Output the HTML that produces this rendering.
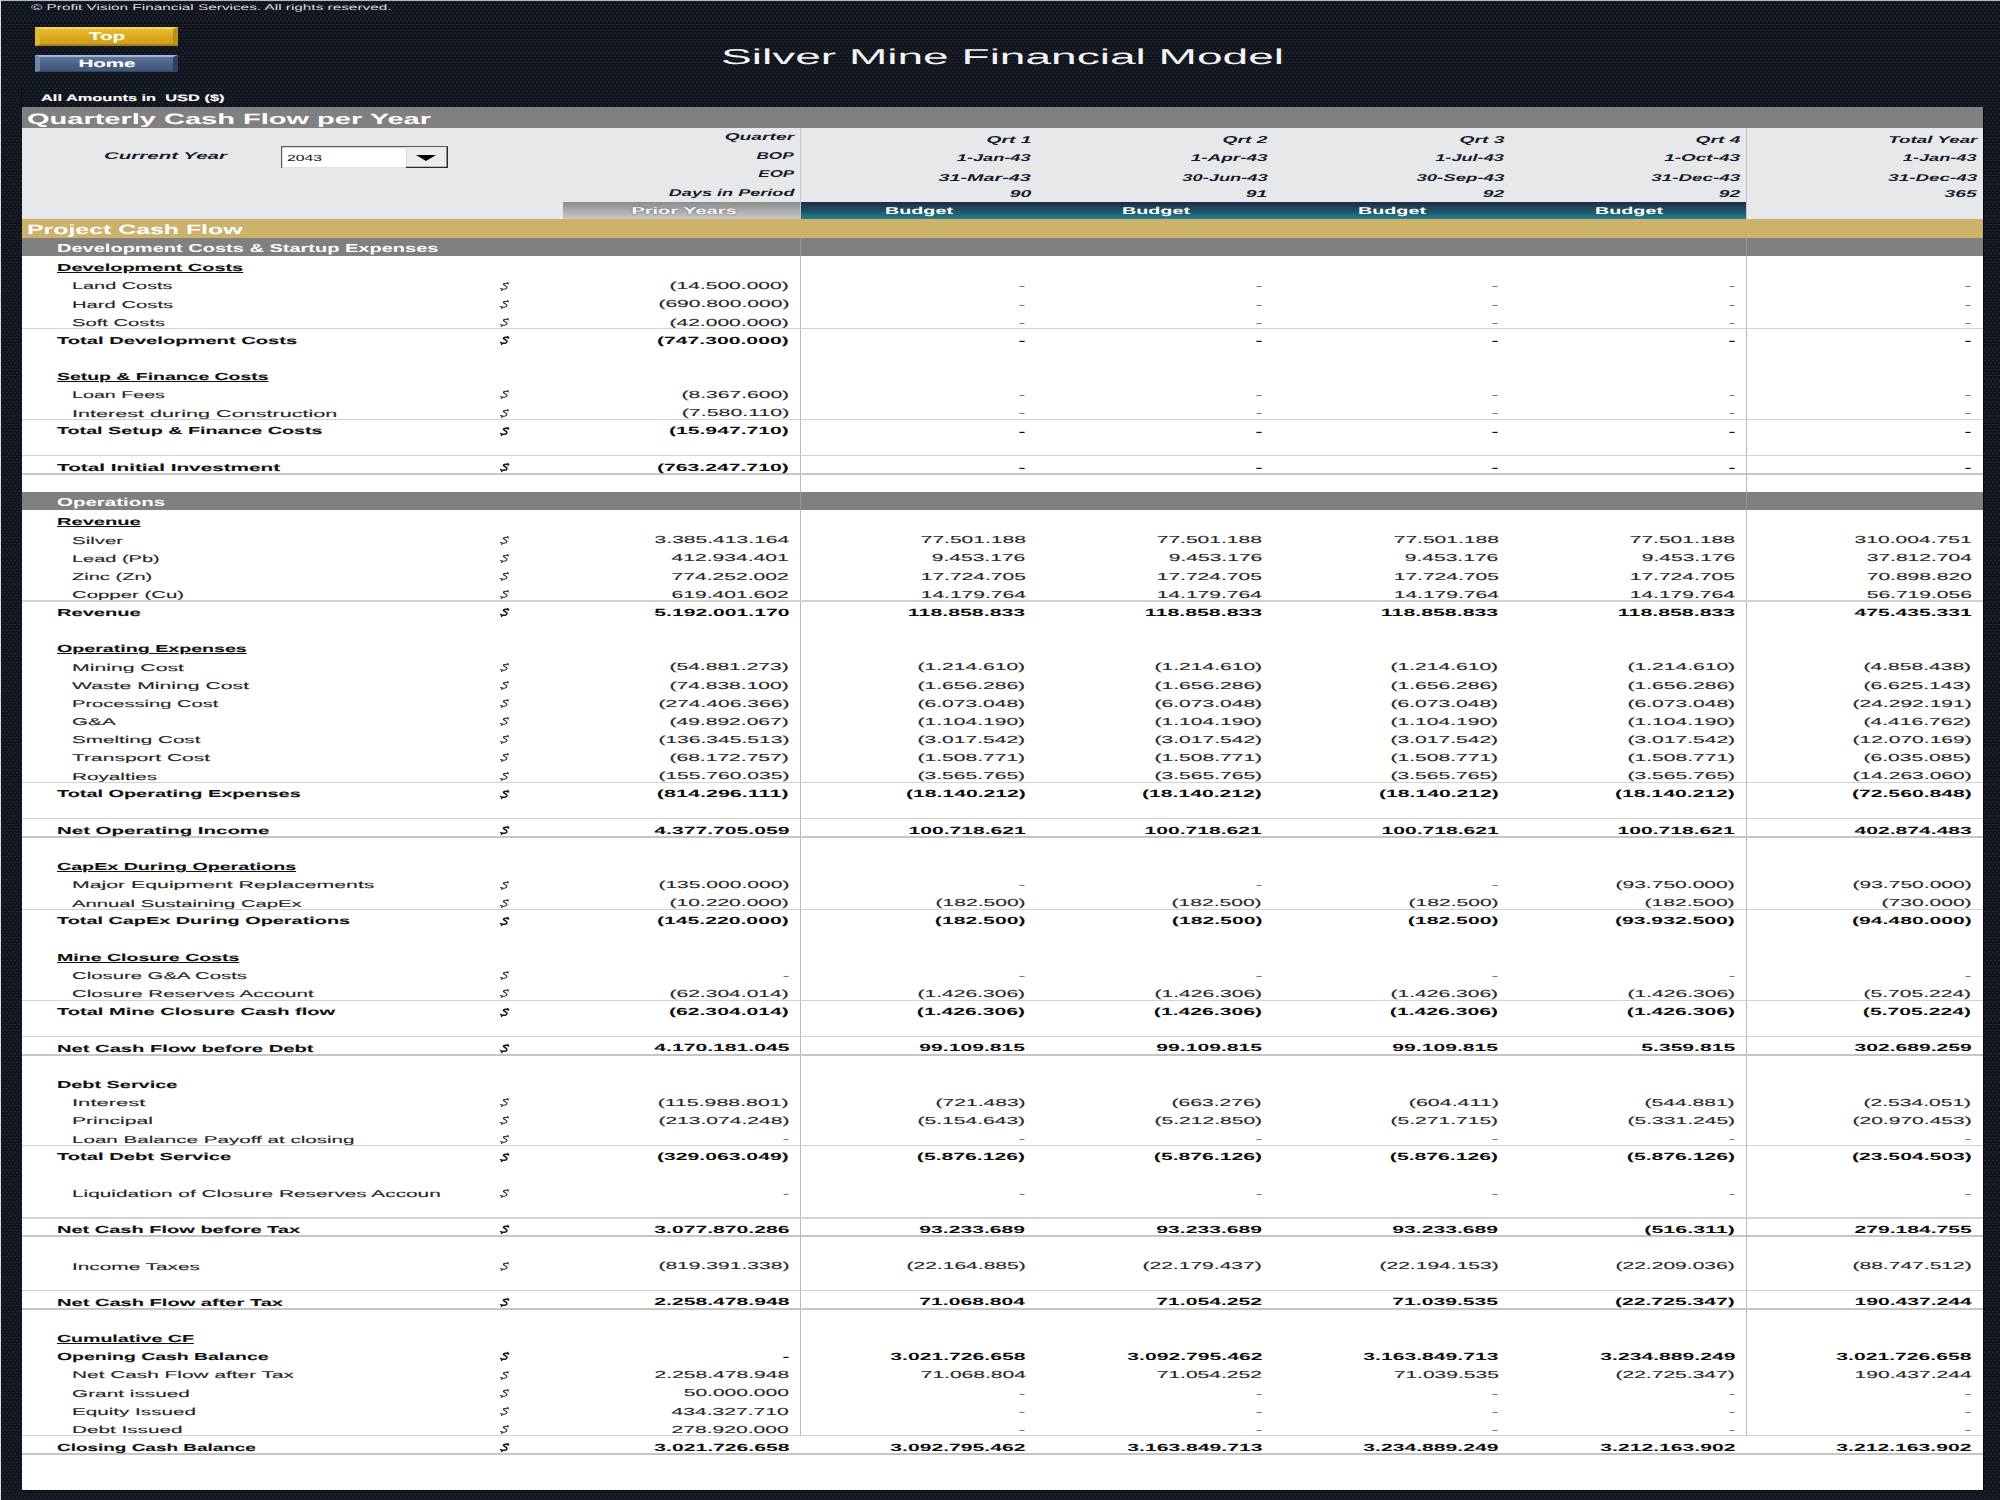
<!DOCTYPE html>
<html><head><meta charset="utf-8"><title>Silver Mine Financial Model</title>
<style>
html,body{margin:0;padding:0;}
body{width:2000px;height:1500px;position:relative;overflow:hidden;font-family:"Liberation Sans",sans-serif;
background-color:#10141c;
background-image:radial-gradient(ellipse 1.3px 0.75px at 1px 1.45px, #272c39 0%, #272c39 55%, rgba(39,44,57,0) 100%),radial-gradient(ellipse 1.3px 0.75px at 3px 4.35px, #272c39 0%, #272c39 55%, rgba(39,44,57,0) 100%);
background-size:4px 5.8px;}
.b{position:absolute;}
.t{position:absolute;white-space:nowrap;display:inline-block;-webkit-text-stroke:0.12px currentColor;text-rendering:geometricPrecision;}
</style></head><body>
<div class="b" style="left:0.00px;top:0.00px;width:2000.00px;height:1.20px;background:#b4b8c2;"></div>
<span class="t" style="top:3.76px;font-size:8.2px;line-height:8.2px;font-weight:normal;font-style:normal;color:#dcdcdc;left:30.50px;transform-origin:0 0;transform:scaleX(1.8732);-webkit-text-stroke:0;">&copy; Profit Vision Financial Services. All rights reserved.</span>
<div class="b" style="left:35px;top:27px;width:133px;height:14.5px;border-style:solid;border-width:2.5px 5px 2px 5px;border-color:#f4d463 #b8901c #a98417 #e2b935;background:linear-gradient(#e9bd2e,#d6a71d 60%,#cf9f1c);"></div>
<span class="t" style="top:31.77px;font-size:11.5px;line-height:11.5px;font-weight:bold;font-style:normal;color:#fffbe8;left:106.50px;transform-origin:50% 0;transform:translateX(-50%) scaleX(1.8039);">Top</span>
<div class="b" style="left:35px;top:54.5px;width:133px;height:14px;border-style:solid;border-width:2.5px 5px 1.5px 5px;border-color:#a3b6d8 #2f4160 #34476a #6d86ad;background:linear-gradient(#5c759d,#495f84 60%,#40557a);"></div>
<span class="t" style="top:58.71px;font-size:10.5px;line-height:10.5px;font-weight:bold;font-style:normal;color:#ffffff;left:106.50px;transform-origin:50% 0;transform:translateX(-50%) scaleX(1.9529);">Home</span>
<span class="t" style="top:46.80px;font-size:21.5px;line-height:21.5px;font-weight:normal;font-style:normal;color:#f4f4f4;left:721.00px;transform-origin:0 0;transform:scaleX(2.1416);-webkit-text-stroke:0;">Silver Mine Financial Model</span>
<span class="t" style="top:93.29px;font-size:9.4px;line-height:9.4px;font-weight:bold;font-style:normal;color:#ffffff;left:41.25px;transform-origin:0 0;transform:scaleX(1.7500);">All Amounts in&nbsp; USD ($)</span>
<div class="b" style="left:22.00px;top:107.30px;width:1960.50px;height:20.40px;background:#808080;"></div>
<span class="t" style="top:111.90px;font-size:15px;line-height:15px;font-weight:bold;font-style:normal;color:#ffffff;left:27.00px;transform-origin:0 0;transform:scaleX(1.9332);-webkit-text-stroke:0;">Quarterly Cash Flow per Year</span>
<div class="b" style="left:22.00px;top:127.70px;width:1960.50px;height:91.30px;background:#e7e8ea;"></div>
<div class="b" style="left:800.00px;top:127.70px;width:1.30px;height:91.30px;background:#c4c4c4;"></div>
<div class="b" style="left:1746.00px;top:127.70px;width:1.30px;height:91.30px;background:#c4c4c4;"></div>
<span class="t" style="top:133.34px;font-size:10px;line-height:10px;font-weight:bold;font-style:italic;color:#151b2b;right:1206.00px;transform-origin:100% 0;transform:scaleX(1.9227);-webkit-text-stroke:0;">Quarter</span>
<span class="t" style="top:151.53px;font-size:10px;line-height:10px;font-weight:bold;font-style:italic;color:#151b2b;right:1206.00px;transform-origin:100% 0;transform:scaleX(1.7172);-webkit-text-stroke:0;">BOP</span>
<span class="t" style="top:170.34px;font-size:10px;line-height:10px;font-weight:bold;font-style:italic;color:#151b2b;right:1206.00px;transform-origin:100% 0;transform:scaleX(1.6925);-webkit-text-stroke:0;">EOP</span>
<span class="t" style="top:188.73px;font-size:10px;line-height:10px;font-weight:bold;font-style:italic;color:#151b2b;right:1206.00px;transform-origin:100% 0;transform:scaleX(1.8093);-webkit-text-stroke:0;">Days in Period</span>
<span class="t" style="top:135.53px;font-size:10px;line-height:10px;font-weight:bold;font-style:italic;color:#151b2b;right:969.00px;transform-origin:100% 0;transform:scaleX(1.9245);-webkit-text-stroke:0;">Qrt 1</span>
<span class="t" style="top:135.53px;font-size:10px;line-height:10px;font-weight:bold;font-style:italic;color:#151b2b;right:732.50px;transform-origin:100% 0;transform:scaleX(1.9245);-webkit-text-stroke:0;">Qrt 2</span>
<span class="t" style="top:135.53px;font-size:10px;line-height:10px;font-weight:bold;font-style:italic;color:#151b2b;right:496.00px;transform-origin:100% 0;transform:scaleX(1.9245);-webkit-text-stroke:0;">Qrt 3</span>
<span class="t" style="top:135.53px;font-size:10px;line-height:10px;font-weight:bold;font-style:italic;color:#151b2b;right:259.50px;transform-origin:100% 0;transform:scaleX(1.9245);-webkit-text-stroke:0;">Qrt 4</span>
<span class="t" style="top:135.53px;font-size:10px;line-height:10px;font-weight:bold;font-style:italic;color:#151b2b;right:23.00px;transform-origin:100% 0;transform:scaleX(1.8801);-webkit-text-stroke:0;">Total Year</span>
<span class="t" style="top:153.53px;font-size:10px;line-height:10px;font-weight:bold;font-style:italic;color:#151b2b;right:969.00px;transform-origin:100% 0;transform:scaleX(1.8184);-webkit-text-stroke:0;">1-Jan-43</span>
<span class="t" style="top:153.53px;font-size:10px;line-height:10px;font-weight:bold;font-style:italic;color:#151b2b;right:732.50px;transform-origin:100% 0;transform:scaleX(1.8949);-webkit-text-stroke:0;">1-Apr-43</span>
<span class="t" style="top:153.53px;font-size:10px;line-height:10px;font-weight:bold;font-style:italic;color:#151b2b;right:496.00px;transform-origin:100% 0;transform:scaleX(1.8128);-webkit-text-stroke:0;">1-Jul-43</span>
<span class="t" style="top:153.53px;font-size:10px;line-height:10px;font-weight:bold;font-style:italic;color:#151b2b;right:259.50px;transform-origin:100% 0;transform:scaleX(1.8923);-webkit-text-stroke:0;">1-Oct-43</span>
<span class="t" style="top:153.53px;font-size:10px;line-height:10px;font-weight:bold;font-style:italic;color:#151b2b;right:23.00px;transform-origin:100% 0;transform:scaleX(1.8184);-webkit-text-stroke:0;">1-Jan-43</span>
<span class="t" style="top:173.53px;font-size:10px;line-height:10px;font-weight:bold;font-style:italic;color:#151b2b;right:969.00px;transform-origin:100% 0;transform:scaleX(1.9744);-webkit-text-stroke:0;">31-Mar-43</span>
<span class="t" style="top:173.53px;font-size:10px;line-height:10px;font-weight:bold;font-style:italic;color:#151b2b;right:732.50px;transform-origin:100% 0;transform:scaleX(1.8294);-webkit-text-stroke:0;">30-Jun-43</span>
<span class="t" style="top:173.53px;font-size:10px;line-height:10px;font-weight:bold;font-style:italic;color:#151b2b;right:496.00px;transform-origin:100% 0;transform:scaleX(1.8587);-webkit-text-stroke:0;">30-Sep-43</span>
<span class="t" style="top:173.53px;font-size:10px;line-height:10px;font-weight:bold;font-style:italic;color:#151b2b;right:259.50px;transform-origin:100% 0;transform:scaleX(1.8813);-webkit-text-stroke:0;">31-Dec-43</span>
<span class="t" style="top:173.53px;font-size:10px;line-height:10px;font-weight:bold;font-style:italic;color:#151b2b;right:23.00px;transform-origin:100% 0;transform:scaleX(1.8813);-webkit-text-stroke:0;">31-Dec-43</span>
<span class="t" style="top:189.53px;font-size:10px;line-height:10px;font-weight:bold;font-style:italic;color:#151b2b;right:969.00px;transform-origin:100% 0;transform:scaleX(1.9317);-webkit-text-stroke:0;">90</span>
<span class="t" style="top:189.53px;font-size:10px;line-height:10px;font-weight:bold;font-style:italic;color:#151b2b;right:732.50px;transform-origin:100% 0;transform:scaleX(1.9317);-webkit-text-stroke:0;">91</span>
<span class="t" style="top:189.53px;font-size:10px;line-height:10px;font-weight:bold;font-style:italic;color:#151b2b;right:496.00px;transform-origin:100% 0;transform:scaleX(1.9317);-webkit-text-stroke:0;">92</span>
<span class="t" style="top:189.53px;font-size:10px;line-height:10px;font-weight:bold;font-style:italic;color:#151b2b;right:259.50px;transform-origin:100% 0;transform:scaleX(1.9317);-webkit-text-stroke:0;">92</span>
<span class="t" style="top:189.53px;font-size:10px;line-height:10px;font-weight:bold;font-style:italic;color:#151b2b;right:23.00px;transform-origin:100% 0;transform:scaleX(1.9317);-webkit-text-stroke:0;">365</span>
<span class="t" style="top:152.20px;font-size:9.8px;line-height:9.8px;font-weight:bold;font-style:italic;color:#151b2b;left:104.00px;transform-origin:0 0;transform:scaleX(2.0914);-webkit-text-stroke:0;">Current Year</span>
<div class="b" style="left:280.50px;top:146.00px;width:167.50px;height:22.00px;background:#ffffff;box-shadow:inset 1.2px 1.2px 0 #5a5a5a, inset -1px -1px 0 #e0e0e0;"></div>
<div class="b" style="left:405.50px;top:147.20px;width:42.50px;height:20.80px;background:#ededed;box-shadow:inset -1.5px -1.2px 0 #2a2a2a, inset 1px 0 0 #d8d8d8;"></div>
<div class="b" style="left:415.5px;top:154.8px;width:0;height:0;border-left:10.8px solid transparent;border-right:10.8px solid transparent;border-top:6.2px solid #000;"></div>
<span class="t" style="top:153.88px;font-size:9px;line-height:9px;font-weight:normal;font-style:normal;color:#111;left:287.00px;transform-origin:0 0;transform:scaleX(1.7473);-webkit-text-stroke:0;">2043</span>
<div class="b" style="left:563.00px;top:202.00px;width:236.50px;height:17.00px;background:linear-gradient(#8c8c8c,#c9c9c9);"></div>
<span class="t" style="top:207.13px;font-size:10px;line-height:10px;font-weight:bold;font-style:normal;color:#f8f8f8;left:683.50px;transform-origin:50% 0;transform:translateX(-50%) scaleX(1.9947);text-shadow:0 0 1px #555,0 0 1px #555;">Prior Years</span>
<div class="b" style="left:801.00px;top:202.00px;width:945.00px;height:17.00px;background:linear-gradient(#1d2b43 0%,#1f5468 55%,#23808f 100%);"></div>
<span class="t" style="top:207.44px;font-size:10px;line-height:10px;font-weight:bold;font-style:normal;color:#ffffff;left:919.00px;transform-origin:50% 0;transform:translateX(-50%) scaleX(1.9737);-webkit-text-stroke:0;">Budget</span>
<span class="t" style="top:207.44px;font-size:10px;line-height:10px;font-weight:bold;font-style:normal;color:#ffffff;left:1155.50px;transform-origin:50% 0;transform:translateX(-50%) scaleX(1.9737);-webkit-text-stroke:0;">Budget</span>
<span class="t" style="top:207.44px;font-size:10px;line-height:10px;font-weight:bold;font-style:normal;color:#ffffff;left:1392.00px;transform-origin:50% 0;transform:translateX(-50%) scaleX(1.9737);-webkit-text-stroke:0;">Budget</span>
<span class="t" style="top:207.44px;font-size:10px;line-height:10px;font-weight:bold;font-style:normal;color:#ffffff;left:1628.50px;transform-origin:50% 0;transform:translateX(-50%) scaleX(1.9737);-webkit-text-stroke:0;">Budget</span>
<div class="b" style="left:22.00px;top:219.00px;width:1960.50px;height:19.20px;background:#ccb26b;"></div>
<span class="t" style="top:223.07px;font-size:13.5px;line-height:13.5px;font-weight:bold;font-style:normal;color:#ffffff;left:27.00px;transform-origin:0 0;transform:scaleX(1.8414);-webkit-text-stroke:0;">Project Cash Flow</span>
<div class="b" style="left:22.00px;top:238.20px;width:1960.50px;height:1251.80px;background:#ffffff;"></div>
<div class="b" style="left:1982.50px;top:107.30px;width:1.20px;height:1383.70px;background:#05070b;"></div>
<div class="b" style="left:22.00px;top:1490.00px;width:1961.70px;height:1.30px;background:#05070b;"></div>
<div class="b" style="left:0.00px;top:0.00px;width:1.20px;height:1500.00px;background:#dcdcdc;"></div>
<div class="b" style="left:21.30px;top:88.00px;width:1.00px;height:19.30px;background:#0a0c12;"></div>
<div class="b" style="left:800.00px;top:238.20px;width:1.40px;height:1197.45px;background:#b8b8b8;"></div>
<div class="b" style="left:1746.00px;top:238.20px;width:1.40px;height:1197.45px;background:#b8b8b8;"></div>
<div class="b" style="left:22.00px;top:237.75px;width:1960.50px;height:18.30px;background:#808080;"></div>
<div class="b" style="left:800.00px;top:237.75px;width:1.30px;height:18.30px;background:#9a9a9a;"></div>
<div class="b" style="left:1746.00px;top:237.75px;width:1.30px;height:18.30px;background:#9a9a9a;"></div>
<span class="t" style="top:244.32px;font-size:11.5px;line-height:11.5px;font-weight:bold;font-style:normal;color:#ffffff;left:57.00px;transform-origin:0 0;transform:scaleX(1.7402);-webkit-text-stroke:0;">Development Costs &amp; Startup Expenses</span>
<span class="t" style="top:264.07px;font-size:10.2px;line-height:10.2px;font-weight:bold;font-style:normal;color:#111111;text-decoration:underline;left:57.00px;transform-origin:0 0;transform:scaleX(1.9579);-webkit-text-stroke:0.1px currentColor;">Development Costs</span>
<span class="t" style="top:282.47px;font-size:9.9px;line-height:9.9px;font-weight:normal;font-style:normal;color:#262626;left:71.50px;transform-origin:0 0;transform:scaleX(2.0128);">Land Costs</span>
<svg class="b" style="left:499px;top:280.55px" width="12" height="11" viewBox="0 0 12 11"><path d="M9.6 2.9 C8.7 2.0 5.5 1.9 4.5 3.0 C3.5 4.2 8.6 4.8 8.0 6.7 C7.4 8.5 3.6 8.7 1.6 7.6 M8.9 1.5 L8.4 2.4 M2.6 9.5 L3.1 8.6" fill="none" stroke="#2a2a2a" stroke-width="1.15" stroke-linecap="round"/></svg>
<span class="t" style="top:282.22px;font-size:10.2px;line-height:10.2px;font-weight:normal;font-style:normal;color:#262626;right:1211.00px;transform-origin:100% 0;transform:scaleX(2.0653);">(14.500.000)</span>
<span class="t" style="top:282.39px;font-size:10px;line-height:10px;font-weight:normal;font-style:normal;color:#555;right:974.50px;transform-origin:100% 0;transform:scaleX(1.9439);">-</span>
<span class="t" style="top:282.39px;font-size:10px;line-height:10px;font-weight:normal;font-style:normal;color:#555;right:738.00px;transform-origin:100% 0;transform:scaleX(1.9439);">-</span>
<span class="t" style="top:282.39px;font-size:10px;line-height:10px;font-weight:normal;font-style:normal;color:#555;right:501.50px;transform-origin:100% 0;transform:scaleX(1.9439);">-</span>
<span class="t" style="top:282.39px;font-size:10px;line-height:10px;font-weight:normal;font-style:normal;color:#555;right:265.00px;transform-origin:100% 0;transform:scaleX(1.9439);">-</span>
<span class="t" style="top:282.39px;font-size:10px;line-height:10px;font-weight:normal;font-style:normal;color:#555;right:28.50px;transform-origin:100% 0;transform:scaleX(1.9439);">-</span>
<span class="t" style="top:300.62px;font-size:9.9px;line-height:9.9px;font-weight:normal;font-style:normal;color:#262626;left:71.50px;transform-origin:0 0;transform:scaleX(2.0485);">Hard Costs</span>
<svg class="b" style="left:499px;top:298.70px" width="12" height="11" viewBox="0 0 12 11"><path d="M9.6 2.9 C8.7 2.0 5.5 1.9 4.5 3.0 C3.5 4.2 8.6 4.8 8.0 6.7 C7.4 8.5 3.6 8.7 1.6 7.6 M8.9 1.5 L8.4 2.4 M2.6 9.5 L3.1 8.6" fill="none" stroke="#2a2a2a" stroke-width="1.15" stroke-linecap="round"/></svg>
<span class="t" style="top:300.37px;font-size:10.2px;line-height:10.2px;font-weight:normal;font-style:normal;color:#262626;right:1211.00px;transform-origin:100% 0;transform:scaleX(2.0652);">(690.800.000)</span>
<span class="t" style="top:300.54px;font-size:10px;line-height:10px;font-weight:normal;font-style:normal;color:#555;right:974.50px;transform-origin:100% 0;transform:scaleX(1.9439);">-</span>
<span class="t" style="top:300.54px;font-size:10px;line-height:10px;font-weight:normal;font-style:normal;color:#555;right:738.00px;transform-origin:100% 0;transform:scaleX(1.9439);">-</span>
<span class="t" style="top:300.54px;font-size:10px;line-height:10px;font-weight:normal;font-style:normal;color:#555;right:501.50px;transform-origin:100% 0;transform:scaleX(1.9439);">-</span>
<span class="t" style="top:300.54px;font-size:10px;line-height:10px;font-weight:normal;font-style:normal;color:#555;right:265.00px;transform-origin:100% 0;transform:scaleX(1.9439);">-</span>
<span class="t" style="top:300.54px;font-size:10px;line-height:10px;font-weight:normal;font-style:normal;color:#555;right:28.50px;transform-origin:100% 0;transform:scaleX(1.9439);">-</span>
<span class="t" style="top:318.77px;font-size:9.9px;line-height:9.9px;font-weight:normal;font-style:normal;color:#262626;left:71.50px;transform-origin:0 0;transform:scaleX(2.0436);">Soft Costs</span>
<svg class="b" style="left:499px;top:316.85px" width="12" height="11" viewBox="0 0 12 11"><path d="M9.6 2.9 C8.7 2.0 5.5 1.9 4.5 3.0 C3.5 4.2 8.6 4.8 8.0 6.7 C7.4 8.5 3.6 8.7 1.6 7.6 M8.9 1.5 L8.4 2.4 M2.6 9.5 L3.1 8.6" fill="none" stroke="#2a2a2a" stroke-width="1.15" stroke-linecap="round"/></svg>
<span class="t" style="top:318.52px;font-size:10.2px;line-height:10.2px;font-weight:normal;font-style:normal;color:#262626;right:1211.00px;transform-origin:100% 0;transform:scaleX(2.0653);">(42.000.000)</span>
<span class="t" style="top:318.69px;font-size:10px;line-height:10px;font-weight:normal;font-style:normal;color:#555;right:974.50px;transform-origin:100% 0;transform:scaleX(1.9439);">-</span>
<span class="t" style="top:318.69px;font-size:10px;line-height:10px;font-weight:normal;font-style:normal;color:#555;right:738.00px;transform-origin:100% 0;transform:scaleX(1.9439);">-</span>
<span class="t" style="top:318.69px;font-size:10px;line-height:10px;font-weight:normal;font-style:normal;color:#555;right:501.50px;transform-origin:100% 0;transform:scaleX(1.9439);">-</span>
<span class="t" style="top:318.69px;font-size:10px;line-height:10px;font-weight:normal;font-style:normal;color:#555;right:265.00px;transform-origin:100% 0;transform:scaleX(1.9439);">-</span>
<span class="t" style="top:318.69px;font-size:10px;line-height:10px;font-weight:normal;font-style:normal;color:#555;right:28.50px;transform-origin:100% 0;transform:scaleX(1.9439);">-</span>
<div class="b" style="left:22.00px;top:328.00px;width:1960.50px;height:1.30px;background:#d2d2d2;"></div>
<span class="t" style="top:336.67px;font-size:10.2px;line-height:10.2px;font-weight:bold;font-style:normal;color:#111111;left:57.00px;transform-origin:0 0;transform:scaleX(1.9762);-webkit-text-stroke:0.1px currentColor;">Total Development Costs</span>
<svg class="b" style="left:499px;top:335.00px" width="12" height="11" viewBox="0 0 12 11"><path d="M9.6 2.9 C8.7 2.0 5.5 1.9 4.5 3.0 C3.5 4.2 8.6 4.8 8.0 6.7 C7.4 8.5 3.6 8.7 1.6 7.6 M8.9 1.5 L8.4 2.4 M2.6 9.5 L3.1 8.6" fill="none" stroke="#151515" stroke-width="1.5" stroke-linecap="round"/></svg>
<span class="t" style="top:336.50px;font-size:10.4px;line-height:10.4px;font-weight:bold;font-style:normal;color:#0d0d0d;right:1211.00px;transform-origin:100% 0;transform:scaleX(2.0361);-webkit-text-stroke:0;">(747.300.000)</span>
<span class="t" style="top:336.84px;font-size:10px;line-height:10px;font-weight:bold;font-style:normal;color:#111;right:974.50px;transform-origin:100% 0;transform:scaleX(1.9439);">-</span>
<span class="t" style="top:336.84px;font-size:10px;line-height:10px;font-weight:bold;font-style:normal;color:#111;right:738.00px;transform-origin:100% 0;transform:scaleX(1.9439);">-</span>
<span class="t" style="top:336.84px;font-size:10px;line-height:10px;font-weight:bold;font-style:normal;color:#111;right:501.50px;transform-origin:100% 0;transform:scaleX(1.9439);">-</span>
<span class="t" style="top:336.84px;font-size:10px;line-height:10px;font-weight:bold;font-style:normal;color:#111;right:265.00px;transform-origin:100% 0;transform:scaleX(1.9439);">-</span>
<span class="t" style="top:336.84px;font-size:10px;line-height:10px;font-weight:bold;font-style:normal;color:#111;right:28.50px;transform-origin:100% 0;transform:scaleX(1.9439);">-</span>
<span class="t" style="top:372.97px;font-size:10.2px;line-height:10.2px;font-weight:bold;font-style:normal;color:#111111;text-decoration:underline;left:57.00px;transform-origin:0 0;transform:scaleX(1.9068);-webkit-text-stroke:0.1px currentColor;">Setup &amp; Finance Costs</span>
<span class="t" style="top:391.37px;font-size:9.9px;line-height:9.9px;font-weight:normal;font-style:normal;color:#262626;left:71.50px;transform-origin:0 0;transform:scaleX(1.9916);">Loan Fees</span>
<svg class="b" style="left:499px;top:389.45px" width="12" height="11" viewBox="0 0 12 11"><path d="M9.6 2.9 C8.7 2.0 5.5 1.9 4.5 3.0 C3.5 4.2 8.6 4.8 8.0 6.7 C7.4 8.5 3.6 8.7 1.6 7.6 M8.9 1.5 L8.4 2.4 M2.6 9.5 L3.1 8.6" fill="none" stroke="#2a2a2a" stroke-width="1.15" stroke-linecap="round"/></svg>
<span class="t" style="top:391.12px;font-size:10.2px;line-height:10.2px;font-weight:normal;font-style:normal;color:#262626;right:1211.00px;transform-origin:100% 0;transform:scaleX(2.0654);">(8.367.600)</span>
<span class="t" style="top:391.29px;font-size:10px;line-height:10px;font-weight:normal;font-style:normal;color:#555;right:974.50px;transform-origin:100% 0;transform:scaleX(1.9439);">-</span>
<span class="t" style="top:391.29px;font-size:10px;line-height:10px;font-weight:normal;font-style:normal;color:#555;right:738.00px;transform-origin:100% 0;transform:scaleX(1.9439);">-</span>
<span class="t" style="top:391.29px;font-size:10px;line-height:10px;font-weight:normal;font-style:normal;color:#555;right:501.50px;transform-origin:100% 0;transform:scaleX(1.9439);">-</span>
<span class="t" style="top:391.29px;font-size:10px;line-height:10px;font-weight:normal;font-style:normal;color:#555;right:265.00px;transform-origin:100% 0;transform:scaleX(1.9439);">-</span>
<span class="t" style="top:391.29px;font-size:10px;line-height:10px;font-weight:normal;font-style:normal;color:#555;right:28.50px;transform-origin:100% 0;transform:scaleX(1.9439);">-</span>
<span class="t" style="top:409.52px;font-size:9.9px;line-height:9.9px;font-weight:normal;font-style:normal;color:#262626;left:71.50px;transform-origin:0 0;transform:scaleX(2.1870);">Interest during Construction</span>
<svg class="b" style="left:499px;top:407.60px" width="12" height="11" viewBox="0 0 12 11"><path d="M9.6 2.9 C8.7 2.0 5.5 1.9 4.5 3.0 C3.5 4.2 8.6 4.8 8.0 6.7 C7.4 8.5 3.6 8.7 1.6 7.6 M8.9 1.5 L8.4 2.4 M2.6 9.5 L3.1 8.6" fill="none" stroke="#2a2a2a" stroke-width="1.15" stroke-linecap="round"/></svg>
<span class="t" style="top:409.27px;font-size:10.2px;line-height:10.2px;font-weight:normal;font-style:normal;color:#262626;right:1211.00px;transform-origin:100% 0;transform:scaleX(2.0956);">(7.580.110)</span>
<span class="t" style="top:409.44px;font-size:10px;line-height:10px;font-weight:normal;font-style:normal;color:#555;right:974.50px;transform-origin:100% 0;transform:scaleX(1.9439);">-</span>
<span class="t" style="top:409.44px;font-size:10px;line-height:10px;font-weight:normal;font-style:normal;color:#555;right:738.00px;transform-origin:100% 0;transform:scaleX(1.9439);">-</span>
<span class="t" style="top:409.44px;font-size:10px;line-height:10px;font-weight:normal;font-style:normal;color:#555;right:501.50px;transform-origin:100% 0;transform:scaleX(1.9439);">-</span>
<span class="t" style="top:409.44px;font-size:10px;line-height:10px;font-weight:normal;font-style:normal;color:#555;right:265.00px;transform-origin:100% 0;transform:scaleX(1.9439);">-</span>
<span class="t" style="top:409.44px;font-size:10px;line-height:10px;font-weight:normal;font-style:normal;color:#555;right:28.50px;transform-origin:100% 0;transform:scaleX(1.9439);">-</span>
<div class="b" style="left:22.00px;top:418.75px;width:1960.50px;height:1.30px;background:#d2d2d2;"></div>
<span class="t" style="top:427.42px;font-size:10.2px;line-height:10.2px;font-weight:bold;font-style:normal;color:#111111;left:57.00px;transform-origin:0 0;transform:scaleX(1.9328);-webkit-text-stroke:0.1px currentColor;">Total Setup &amp; Finance Costs</span>
<svg class="b" style="left:499px;top:425.75px" width="12" height="11" viewBox="0 0 12 11"><path d="M9.6 2.9 C8.7 2.0 5.5 1.9 4.5 3.0 C3.5 4.2 8.6 4.8 8.0 6.7 C7.4 8.5 3.6 8.7 1.6 7.6 M8.9 1.5 L8.4 2.4 M2.6 9.5 L3.1 8.6" fill="none" stroke="#151515" stroke-width="1.5" stroke-linecap="round"/></svg>
<span class="t" style="top:427.25px;font-size:10.4px;line-height:10.4px;font-weight:bold;font-style:normal;color:#0d0d0d;right:1211.00px;transform-origin:100% 0;transform:scaleX(2.0366);-webkit-text-stroke:0;">(15.947.710)</span>
<span class="t" style="top:427.59px;font-size:10px;line-height:10px;font-weight:bold;font-style:normal;color:#111;right:974.50px;transform-origin:100% 0;transform:scaleX(1.9439);">-</span>
<span class="t" style="top:427.59px;font-size:10px;line-height:10px;font-weight:bold;font-style:normal;color:#111;right:738.00px;transform-origin:100% 0;transform:scaleX(1.9439);">-</span>
<span class="t" style="top:427.59px;font-size:10px;line-height:10px;font-weight:bold;font-style:normal;color:#111;right:501.50px;transform-origin:100% 0;transform:scaleX(1.9439);">-</span>
<span class="t" style="top:427.59px;font-size:10px;line-height:10px;font-weight:bold;font-style:normal;color:#111;right:265.00px;transform-origin:100% 0;transform:scaleX(1.9439);">-</span>
<span class="t" style="top:427.59px;font-size:10px;line-height:10px;font-weight:bold;font-style:normal;color:#111;right:28.50px;transform-origin:100% 0;transform:scaleX(1.9439);">-</span>
<div class="b" style="left:22.00px;top:455.05px;width:1960.50px;height:1.30px;background:#d2d2d2;"></div>
<div class="b" style="left:22.00px;top:472.90px;width:1960.50px;height:2.00px;background:#c6c6c6;"></div>
<span class="t" style="top:463.72px;font-size:10.2px;line-height:10.2px;font-weight:bold;font-style:normal;color:#111111;left:57.00px;transform-origin:0 0;transform:scaleX(2.0358);-webkit-text-stroke:0.1px currentColor;">Total Initial Investment</span>
<svg class="b" style="left:499px;top:462.05px" width="12" height="11" viewBox="0 0 12 11"><path d="M9.6 2.9 C8.7 2.0 5.5 1.9 4.5 3.0 C3.5 4.2 8.6 4.8 8.0 6.7 C7.4 8.5 3.6 8.7 1.6 7.6 M8.9 1.5 L8.4 2.4 M2.6 9.5 L3.1 8.6" fill="none" stroke="#151515" stroke-width="1.5" stroke-linecap="round"/></svg>
<span class="t" style="top:463.55px;font-size:10.4px;line-height:10.4px;font-weight:bold;font-style:normal;color:#0d0d0d;right:1211.00px;transform-origin:100% 0;transform:scaleX(2.0361);-webkit-text-stroke:0;">(763.247.710)</span>
<span class="t" style="top:463.88px;font-size:10px;line-height:10px;font-weight:bold;font-style:normal;color:#111;right:974.50px;transform-origin:100% 0;transform:scaleX(1.9439);">-</span>
<span class="t" style="top:463.88px;font-size:10px;line-height:10px;font-weight:bold;font-style:normal;color:#111;right:738.00px;transform-origin:100% 0;transform:scaleX(1.9439);">-</span>
<span class="t" style="top:463.88px;font-size:10px;line-height:10px;font-weight:bold;font-style:normal;color:#111;right:501.50px;transform-origin:100% 0;transform:scaleX(1.9439);">-</span>
<span class="t" style="top:463.88px;font-size:10px;line-height:10px;font-weight:bold;font-style:normal;color:#111;right:265.00px;transform-origin:100% 0;transform:scaleX(1.9439);">-</span>
<span class="t" style="top:463.88px;font-size:10px;line-height:10px;font-weight:bold;font-style:normal;color:#111;right:28.50px;transform-origin:100% 0;transform:scaleX(1.9439);">-</span>
<div class="b" style="left:22.00px;top:491.85px;width:1960.50px;height:18.30px;background:#808080;"></div>
<div class="b" style="left:800.00px;top:491.85px;width:1.30px;height:18.30px;background:#9a9a9a;"></div>
<div class="b" style="left:1746.00px;top:491.85px;width:1.30px;height:18.30px;background:#9a9a9a;"></div>
<span class="t" style="top:498.42px;font-size:11.5px;line-height:11.5px;font-weight:bold;font-style:normal;color:#ffffff;left:57.00px;transform-origin:0 0;transform:scaleX(1.7792);-webkit-text-stroke:0;">Operations</span>
<span class="t" style="top:518.17px;font-size:10.2px;line-height:10.2px;font-weight:bold;font-style:normal;color:#111111;text-decoration:underline;left:57.00px;transform-origin:0 0;transform:scaleX(1.9688);-webkit-text-stroke:0.1px currentColor;">Revenue</span>
<span class="t" style="top:536.57px;font-size:9.9px;line-height:9.9px;font-weight:normal;font-style:normal;color:#262626;left:71.50px;transform-origin:0 0;transform:scaleX(2.0725);">Silver</span>
<svg class="b" style="left:499px;top:534.65px" width="12" height="11" viewBox="0 0 12 11"><path d="M9.6 2.9 C8.7 2.0 5.5 1.9 4.5 3.0 C3.5 4.2 8.6 4.8 8.0 6.7 C7.4 8.5 3.6 8.7 1.6 7.6 M8.9 1.5 L8.4 2.4 M2.6 9.5 L3.1 8.6" fill="none" stroke="#2a2a2a" stroke-width="1.15" stroke-linecap="round"/></svg>
<span class="t" style="top:536.32px;font-size:10.2px;line-height:10.2px;font-weight:normal;font-style:normal;color:#262626;right:1211.00px;transform-origin:100% 0;transform:scaleX(2.0654);">3.385.413.164</span>
<span class="t" style="top:536.32px;font-size:10.2px;line-height:10.2px;font-weight:normal;font-style:normal;color:#262626;right:974.50px;transform-origin:100% 0;transform:scaleX(2.0652);">77.501.188</span>
<span class="t" style="top:536.32px;font-size:10.2px;line-height:10.2px;font-weight:normal;font-style:normal;color:#262626;right:738.00px;transform-origin:100% 0;transform:scaleX(2.0652);">77.501.188</span>
<span class="t" style="top:536.32px;font-size:10.2px;line-height:10.2px;font-weight:normal;font-style:normal;color:#262626;right:501.50px;transform-origin:100% 0;transform:scaleX(2.0652);">77.501.188</span>
<span class="t" style="top:536.32px;font-size:10.2px;line-height:10.2px;font-weight:normal;font-style:normal;color:#262626;right:265.00px;transform-origin:100% 0;transform:scaleX(2.0652);">77.501.188</span>
<span class="t" style="top:536.32px;font-size:10.2px;line-height:10.2px;font-weight:normal;font-style:normal;color:#262626;right:28.50px;transform-origin:100% 0;transform:scaleX(2.0657);">310.004.751</span>
<span class="t" style="top:554.72px;font-size:9.9px;line-height:9.9px;font-weight:normal;font-style:normal;color:#262626;left:71.50px;transform-origin:0 0;transform:scaleX(2.0221);">Lead (Pb)</span>
<svg class="b" style="left:499px;top:552.80px" width="12" height="11" viewBox="0 0 12 11"><path d="M9.6 2.9 C8.7 2.0 5.5 1.9 4.5 3.0 C3.5 4.2 8.6 4.8 8.0 6.7 C7.4 8.5 3.6 8.7 1.6 7.6 M8.9 1.5 L8.4 2.4 M2.6 9.5 L3.1 8.6" fill="none" stroke="#2a2a2a" stroke-width="1.15" stroke-linecap="round"/></svg>
<span class="t" style="top:554.47px;font-size:10.2px;line-height:10.2px;font-weight:normal;font-style:normal;color:#262626;right:1211.00px;transform-origin:100% 0;transform:scaleX(2.0657);">412.934.401</span>
<span class="t" style="top:554.47px;font-size:10.2px;line-height:10.2px;font-weight:normal;font-style:normal;color:#262626;right:974.50px;transform-origin:100% 0;transform:scaleX(2.0653);">9.453.176</span>
<span class="t" style="top:554.47px;font-size:10.2px;line-height:10.2px;font-weight:normal;font-style:normal;color:#262626;right:738.00px;transform-origin:100% 0;transform:scaleX(2.0653);">9.453.176</span>
<span class="t" style="top:554.47px;font-size:10.2px;line-height:10.2px;font-weight:normal;font-style:normal;color:#262626;right:501.50px;transform-origin:100% 0;transform:scaleX(2.0653);">9.453.176</span>
<span class="t" style="top:554.47px;font-size:10.2px;line-height:10.2px;font-weight:normal;font-style:normal;color:#262626;right:265.00px;transform-origin:100% 0;transform:scaleX(2.0653);">9.453.176</span>
<span class="t" style="top:554.47px;font-size:10.2px;line-height:10.2px;font-weight:normal;font-style:normal;color:#262626;right:28.50px;transform-origin:100% 0;transform:scaleX(2.0652);">37.812.704</span>
<span class="t" style="top:572.87px;font-size:9.9px;line-height:9.9px;font-weight:normal;font-style:normal;color:#262626;left:71.50px;transform-origin:0 0;transform:scaleX(2.0306);">Zinc (Zn)</span>
<svg class="b" style="left:499px;top:570.95px" width="12" height="11" viewBox="0 0 12 11"><path d="M9.6 2.9 C8.7 2.0 5.5 1.9 4.5 3.0 C3.5 4.2 8.6 4.8 8.0 6.7 C7.4 8.5 3.6 8.7 1.6 7.6 M8.9 1.5 L8.4 2.4 M2.6 9.5 L3.1 8.6" fill="none" stroke="#2a2a2a" stroke-width="1.15" stroke-linecap="round"/></svg>
<span class="t" style="top:572.62px;font-size:10.2px;line-height:10.2px;font-weight:normal;font-style:normal;color:#262626;right:1211.00px;transform-origin:100% 0;transform:scaleX(2.0657);">774.252.002</span>
<span class="t" style="top:572.62px;font-size:10.2px;line-height:10.2px;font-weight:normal;font-style:normal;color:#262626;right:974.50px;transform-origin:100% 0;transform:scaleX(2.0652);">17.724.705</span>
<span class="t" style="top:572.62px;font-size:10.2px;line-height:10.2px;font-weight:normal;font-style:normal;color:#262626;right:738.00px;transform-origin:100% 0;transform:scaleX(2.0652);">17.724.705</span>
<span class="t" style="top:572.62px;font-size:10.2px;line-height:10.2px;font-weight:normal;font-style:normal;color:#262626;right:501.50px;transform-origin:100% 0;transform:scaleX(2.0652);">17.724.705</span>
<span class="t" style="top:572.62px;font-size:10.2px;line-height:10.2px;font-weight:normal;font-style:normal;color:#262626;right:265.00px;transform-origin:100% 0;transform:scaleX(2.0652);">17.724.705</span>
<span class="t" style="top:572.62px;font-size:10.2px;line-height:10.2px;font-weight:normal;font-style:normal;color:#262626;right:28.50px;transform-origin:100% 0;transform:scaleX(2.0652);">70.898.820</span>
<span class="t" style="top:591.02px;font-size:9.9px;line-height:9.9px;font-weight:normal;font-style:normal;color:#262626;left:71.50px;transform-origin:0 0;transform:scaleX(2.0610);">Copper (Cu)</span>
<svg class="b" style="left:499px;top:589.10px" width="12" height="11" viewBox="0 0 12 11"><path d="M9.6 2.9 C8.7 2.0 5.5 1.9 4.5 3.0 C3.5 4.2 8.6 4.8 8.0 6.7 C7.4 8.5 3.6 8.7 1.6 7.6 M8.9 1.5 L8.4 2.4 M2.6 9.5 L3.1 8.6" fill="none" stroke="#2a2a2a" stroke-width="1.15" stroke-linecap="round"/></svg>
<span class="t" style="top:590.77px;font-size:10.2px;line-height:10.2px;font-weight:normal;font-style:normal;color:#262626;right:1211.00px;transform-origin:100% 0;transform:scaleX(2.0657);">619.401.602</span>
<span class="t" style="top:590.77px;font-size:10.2px;line-height:10.2px;font-weight:normal;font-style:normal;color:#262626;right:974.50px;transform-origin:100% 0;transform:scaleX(2.0652);">14.179.764</span>
<span class="t" style="top:590.77px;font-size:10.2px;line-height:10.2px;font-weight:normal;font-style:normal;color:#262626;right:738.00px;transform-origin:100% 0;transform:scaleX(2.0652);">14.179.764</span>
<span class="t" style="top:590.77px;font-size:10.2px;line-height:10.2px;font-weight:normal;font-style:normal;color:#262626;right:501.50px;transform-origin:100% 0;transform:scaleX(2.0652);">14.179.764</span>
<span class="t" style="top:590.77px;font-size:10.2px;line-height:10.2px;font-weight:normal;font-style:normal;color:#262626;right:265.00px;transform-origin:100% 0;transform:scaleX(2.0652);">14.179.764</span>
<span class="t" style="top:590.77px;font-size:10.2px;line-height:10.2px;font-weight:normal;font-style:normal;color:#262626;right:28.50px;transform-origin:100% 0;transform:scaleX(2.0652);">56.719.056</span>
<div class="b" style="left:22.00px;top:600.25px;width:1960.50px;height:1.30px;background:#d2d2d2;"></div>
<span class="t" style="top:608.92px;font-size:10.2px;line-height:10.2px;font-weight:bold;font-style:normal;color:#111111;left:57.00px;transform-origin:0 0;transform:scaleX(1.9688);-webkit-text-stroke:0.1px currentColor;">Revenue</span>
<svg class="b" style="left:499px;top:607.25px" width="12" height="11" viewBox="0 0 12 11"><path d="M9.6 2.9 C8.7 2.0 5.5 1.9 4.5 3.0 C3.5 4.2 8.6 4.8 8.0 6.7 C7.4 8.5 3.6 8.7 1.6 7.6 M8.9 1.5 L8.4 2.4 M2.6 9.5 L3.1 8.6" fill="none" stroke="#151515" stroke-width="1.5" stroke-linecap="round"/></svg>
<span class="t" style="top:608.75px;font-size:10.4px;line-height:10.4px;font-weight:bold;font-style:normal;color:#0d0d0d;right:1211.00px;transform-origin:100% 0;transform:scaleX(2.0327);-webkit-text-stroke:0;">5.192.001.170</span>
<span class="t" style="top:608.75px;font-size:10.4px;line-height:10.4px;font-weight:bold;font-style:normal;color:#0d0d0d;right:974.50px;transform-origin:100% 0;transform:scaleX(2.0513);-webkit-text-stroke:0;">118.858.833</span>
<span class="t" style="top:608.75px;font-size:10.4px;line-height:10.4px;font-weight:bold;font-style:normal;color:#0d0d0d;right:738.00px;transform-origin:100% 0;transform:scaleX(2.0513);-webkit-text-stroke:0;">118.858.833</span>
<span class="t" style="top:608.75px;font-size:10.4px;line-height:10.4px;font-weight:bold;font-style:normal;color:#0d0d0d;right:501.50px;transform-origin:100% 0;transform:scaleX(2.0513);-webkit-text-stroke:0;">118.858.833</span>
<span class="t" style="top:608.75px;font-size:10.4px;line-height:10.4px;font-weight:bold;font-style:normal;color:#0d0d0d;right:265.00px;transform-origin:100% 0;transform:scaleX(2.0513);-webkit-text-stroke:0;">118.858.833</span>
<span class="t" style="top:608.75px;font-size:10.4px;line-height:10.4px;font-weight:bold;font-style:normal;color:#0d0d0d;right:28.50px;transform-origin:100% 0;transform:scaleX(2.0308);-webkit-text-stroke:0;">475.435.331</span>
<span class="t" style="top:645.22px;font-size:10.2px;line-height:10.2px;font-weight:bold;font-style:normal;color:#111111;text-decoration:underline;left:57.00px;transform-origin:0 0;transform:scaleX(1.9265);-webkit-text-stroke:0.1px currentColor;">Operating Expenses</span>
<span class="t" style="top:663.62px;font-size:9.9px;line-height:9.9px;font-weight:normal;font-style:normal;color:#262626;left:71.50px;transform-origin:0 0;transform:scaleX(2.1479);">Mining Cost</span>
<svg class="b" style="left:499px;top:661.70px" width="12" height="11" viewBox="0 0 12 11"><path d="M9.6 2.9 C8.7 2.0 5.5 1.9 4.5 3.0 C3.5 4.2 8.6 4.8 8.0 6.7 C7.4 8.5 3.6 8.7 1.6 7.6 M8.9 1.5 L8.4 2.4 M2.6 9.5 L3.1 8.6" fill="none" stroke="#2a2a2a" stroke-width="1.15" stroke-linecap="round"/></svg>
<span class="t" style="top:663.37px;font-size:10.2px;line-height:10.2px;font-weight:normal;font-style:normal;color:#262626;right:1211.00px;transform-origin:100% 0;transform:scaleX(2.0653);">(54.881.273)</span>
<span class="t" style="top:663.37px;font-size:10.2px;line-height:10.2px;font-weight:normal;font-style:normal;color:#262626;right:974.50px;transform-origin:100% 0;transform:scaleX(2.0654);">(1.214.610)</span>
<span class="t" style="top:663.37px;font-size:10.2px;line-height:10.2px;font-weight:normal;font-style:normal;color:#262626;right:738.00px;transform-origin:100% 0;transform:scaleX(2.0654);">(1.214.610)</span>
<span class="t" style="top:663.37px;font-size:10.2px;line-height:10.2px;font-weight:normal;font-style:normal;color:#262626;right:501.50px;transform-origin:100% 0;transform:scaleX(2.0654);">(1.214.610)</span>
<span class="t" style="top:663.37px;font-size:10.2px;line-height:10.2px;font-weight:normal;font-style:normal;color:#262626;right:265.00px;transform-origin:100% 0;transform:scaleX(2.0654);">(1.214.610)</span>
<span class="t" style="top:663.37px;font-size:10.2px;line-height:10.2px;font-weight:normal;font-style:normal;color:#262626;right:28.50px;transform-origin:100% 0;transform:scaleX(2.0654);">(4.858.438)</span>
<span class="t" style="top:681.77px;font-size:9.9px;line-height:9.9px;font-weight:normal;font-style:normal;color:#262626;left:71.50px;transform-origin:0 0;transform:scaleX(2.1462);">Waste Mining Cost</span>
<svg class="b" style="left:499px;top:679.85px" width="12" height="11" viewBox="0 0 12 11"><path d="M9.6 2.9 C8.7 2.0 5.5 1.9 4.5 3.0 C3.5 4.2 8.6 4.8 8.0 6.7 C7.4 8.5 3.6 8.7 1.6 7.6 M8.9 1.5 L8.4 2.4 M2.6 9.5 L3.1 8.6" fill="none" stroke="#2a2a2a" stroke-width="1.15" stroke-linecap="round"/></svg>
<span class="t" style="top:681.52px;font-size:10.2px;line-height:10.2px;font-weight:normal;font-style:normal;color:#262626;right:1211.00px;transform-origin:100% 0;transform:scaleX(2.0653);">(74.838.100)</span>
<span class="t" style="top:681.52px;font-size:10.2px;line-height:10.2px;font-weight:normal;font-style:normal;color:#262626;right:974.50px;transform-origin:100% 0;transform:scaleX(2.0654);">(1.656.286)</span>
<span class="t" style="top:681.52px;font-size:10.2px;line-height:10.2px;font-weight:normal;font-style:normal;color:#262626;right:738.00px;transform-origin:100% 0;transform:scaleX(2.0654);">(1.656.286)</span>
<span class="t" style="top:681.52px;font-size:10.2px;line-height:10.2px;font-weight:normal;font-style:normal;color:#262626;right:501.50px;transform-origin:100% 0;transform:scaleX(2.0654);">(1.656.286)</span>
<span class="t" style="top:681.52px;font-size:10.2px;line-height:10.2px;font-weight:normal;font-style:normal;color:#262626;right:265.00px;transform-origin:100% 0;transform:scaleX(2.0654);">(1.656.286)</span>
<span class="t" style="top:681.52px;font-size:10.2px;line-height:10.2px;font-weight:normal;font-style:normal;color:#262626;right:28.50px;transform-origin:100% 0;transform:scaleX(2.0654);">(6.625.143)</span>
<span class="t" style="top:699.92px;font-size:9.9px;line-height:9.9px;font-weight:normal;font-style:normal;color:#262626;left:71.50px;transform-origin:0 0;transform:scaleX(2.0346);">Processing Cost</span>
<svg class="b" style="left:499px;top:698.00px" width="12" height="11" viewBox="0 0 12 11"><path d="M9.6 2.9 C8.7 2.0 5.5 1.9 4.5 3.0 C3.5 4.2 8.6 4.8 8.0 6.7 C7.4 8.5 3.6 8.7 1.6 7.6 M8.9 1.5 L8.4 2.4 M2.6 9.5 L3.1 8.6" fill="none" stroke="#2a2a2a" stroke-width="1.15" stroke-linecap="round"/></svg>
<span class="t" style="top:699.67px;font-size:10.2px;line-height:10.2px;font-weight:normal;font-style:normal;color:#262626;right:1211.00px;transform-origin:100% 0;transform:scaleX(2.0652);">(274.406.366)</span>
<span class="t" style="top:699.67px;font-size:10.2px;line-height:10.2px;font-weight:normal;font-style:normal;color:#262626;right:974.50px;transform-origin:100% 0;transform:scaleX(2.0654);">(6.073.048)</span>
<span class="t" style="top:699.67px;font-size:10.2px;line-height:10.2px;font-weight:normal;font-style:normal;color:#262626;right:738.00px;transform-origin:100% 0;transform:scaleX(2.0654);">(6.073.048)</span>
<span class="t" style="top:699.67px;font-size:10.2px;line-height:10.2px;font-weight:normal;font-style:normal;color:#262626;right:501.50px;transform-origin:100% 0;transform:scaleX(2.0654);">(6.073.048)</span>
<span class="t" style="top:699.67px;font-size:10.2px;line-height:10.2px;font-weight:normal;font-style:normal;color:#262626;right:265.00px;transform-origin:100% 0;transform:scaleX(2.0654);">(6.073.048)</span>
<span class="t" style="top:699.67px;font-size:10.2px;line-height:10.2px;font-weight:normal;font-style:normal;color:#262626;right:28.50px;transform-origin:100% 0;transform:scaleX(2.0653);">(24.292.191)</span>
<span class="t" style="top:718.07px;font-size:9.9px;line-height:9.9px;font-weight:normal;font-style:normal;color:#262626;left:71.50px;transform-origin:0 0;transform:scaleX(2.0948);">G&amp;A</span>
<svg class="b" style="left:499px;top:716.15px" width="12" height="11" viewBox="0 0 12 11"><path d="M9.6 2.9 C8.7 2.0 5.5 1.9 4.5 3.0 C3.5 4.2 8.6 4.8 8.0 6.7 C7.4 8.5 3.6 8.7 1.6 7.6 M8.9 1.5 L8.4 2.4 M2.6 9.5 L3.1 8.6" fill="none" stroke="#2a2a2a" stroke-width="1.15" stroke-linecap="round"/></svg>
<span class="t" style="top:717.82px;font-size:10.2px;line-height:10.2px;font-weight:normal;font-style:normal;color:#262626;right:1211.00px;transform-origin:100% 0;transform:scaleX(2.0653);">(49.892.067)</span>
<span class="t" style="top:717.82px;font-size:10.2px;line-height:10.2px;font-weight:normal;font-style:normal;color:#262626;right:974.50px;transform-origin:100% 0;transform:scaleX(2.0654);">(1.104.190)</span>
<span class="t" style="top:717.82px;font-size:10.2px;line-height:10.2px;font-weight:normal;font-style:normal;color:#262626;right:738.00px;transform-origin:100% 0;transform:scaleX(2.0654);">(1.104.190)</span>
<span class="t" style="top:717.82px;font-size:10.2px;line-height:10.2px;font-weight:normal;font-style:normal;color:#262626;right:501.50px;transform-origin:100% 0;transform:scaleX(2.0654);">(1.104.190)</span>
<span class="t" style="top:717.82px;font-size:10.2px;line-height:10.2px;font-weight:normal;font-style:normal;color:#262626;right:265.00px;transform-origin:100% 0;transform:scaleX(2.0654);">(1.104.190)</span>
<span class="t" style="top:717.82px;font-size:10.2px;line-height:10.2px;font-weight:normal;font-style:normal;color:#262626;right:28.50px;transform-origin:100% 0;transform:scaleX(2.0654);">(4.416.762)</span>
<span class="t" style="top:736.22px;font-size:9.9px;line-height:9.9px;font-weight:normal;font-style:normal;color:#262626;left:71.50px;transform-origin:0 0;transform:scaleX(2.0889);">Smelting Cost</span>
<svg class="b" style="left:499px;top:734.30px" width="12" height="11" viewBox="0 0 12 11"><path d="M9.6 2.9 C8.7 2.0 5.5 1.9 4.5 3.0 C3.5 4.2 8.6 4.8 8.0 6.7 C7.4 8.5 3.6 8.7 1.6 7.6 M8.9 1.5 L8.4 2.4 M2.6 9.5 L3.1 8.6" fill="none" stroke="#2a2a2a" stroke-width="1.15" stroke-linecap="round"/></svg>
<span class="t" style="top:735.97px;font-size:10.2px;line-height:10.2px;font-weight:normal;font-style:normal;color:#262626;right:1211.00px;transform-origin:100% 0;transform:scaleX(2.0652);">(136.345.513)</span>
<span class="t" style="top:735.97px;font-size:10.2px;line-height:10.2px;font-weight:normal;font-style:normal;color:#262626;right:974.50px;transform-origin:100% 0;transform:scaleX(2.0654);">(3.017.542)</span>
<span class="t" style="top:735.97px;font-size:10.2px;line-height:10.2px;font-weight:normal;font-style:normal;color:#262626;right:738.00px;transform-origin:100% 0;transform:scaleX(2.0654);">(3.017.542)</span>
<span class="t" style="top:735.97px;font-size:10.2px;line-height:10.2px;font-weight:normal;font-style:normal;color:#262626;right:501.50px;transform-origin:100% 0;transform:scaleX(2.0654);">(3.017.542)</span>
<span class="t" style="top:735.97px;font-size:10.2px;line-height:10.2px;font-weight:normal;font-style:normal;color:#262626;right:265.00px;transform-origin:100% 0;transform:scaleX(2.0654);">(3.017.542)</span>
<span class="t" style="top:735.97px;font-size:10.2px;line-height:10.2px;font-weight:normal;font-style:normal;color:#262626;right:28.50px;transform-origin:100% 0;transform:scaleX(2.0653);">(12.070.169)</span>
<span class="t" style="top:754.37px;font-size:9.9px;line-height:9.9px;font-weight:normal;font-style:normal;color:#262626;left:71.50px;transform-origin:0 0;transform:scaleX(2.1269);">Transport Cost</span>
<svg class="b" style="left:499px;top:752.45px" width="12" height="11" viewBox="0 0 12 11"><path d="M9.6 2.9 C8.7 2.0 5.5 1.9 4.5 3.0 C3.5 4.2 8.6 4.8 8.0 6.7 C7.4 8.5 3.6 8.7 1.6 7.6 M8.9 1.5 L8.4 2.4 M2.6 9.5 L3.1 8.6" fill="none" stroke="#2a2a2a" stroke-width="1.15" stroke-linecap="round"/></svg>
<span class="t" style="top:754.12px;font-size:10.2px;line-height:10.2px;font-weight:normal;font-style:normal;color:#262626;right:1211.00px;transform-origin:100% 0;transform:scaleX(2.0653);">(68.172.757)</span>
<span class="t" style="top:754.12px;font-size:10.2px;line-height:10.2px;font-weight:normal;font-style:normal;color:#262626;right:974.50px;transform-origin:100% 0;transform:scaleX(2.0654);">(1.508.771)</span>
<span class="t" style="top:754.12px;font-size:10.2px;line-height:10.2px;font-weight:normal;font-style:normal;color:#262626;right:738.00px;transform-origin:100% 0;transform:scaleX(2.0654);">(1.508.771)</span>
<span class="t" style="top:754.12px;font-size:10.2px;line-height:10.2px;font-weight:normal;font-style:normal;color:#262626;right:501.50px;transform-origin:100% 0;transform:scaleX(2.0654);">(1.508.771)</span>
<span class="t" style="top:754.12px;font-size:10.2px;line-height:10.2px;font-weight:normal;font-style:normal;color:#262626;right:265.00px;transform-origin:100% 0;transform:scaleX(2.0654);">(1.508.771)</span>
<span class="t" style="top:754.12px;font-size:10.2px;line-height:10.2px;font-weight:normal;font-style:normal;color:#262626;right:28.50px;transform-origin:100% 0;transform:scaleX(2.0654);">(6.035.085)</span>
<span class="t" style="top:772.52px;font-size:9.9px;line-height:9.9px;font-weight:normal;font-style:normal;color:#262626;left:71.50px;transform-origin:0 0;transform:scaleX(2.0951);">Royalties</span>
<svg class="b" style="left:499px;top:770.60px" width="12" height="11" viewBox="0 0 12 11"><path d="M9.6 2.9 C8.7 2.0 5.5 1.9 4.5 3.0 C3.5 4.2 8.6 4.8 8.0 6.7 C7.4 8.5 3.6 8.7 1.6 7.6 M8.9 1.5 L8.4 2.4 M2.6 9.5 L3.1 8.6" fill="none" stroke="#2a2a2a" stroke-width="1.15" stroke-linecap="round"/></svg>
<span class="t" style="top:772.27px;font-size:10.2px;line-height:10.2px;font-weight:normal;font-style:normal;color:#262626;right:1211.00px;transform-origin:100% 0;transform:scaleX(2.0652);">(155.760.035)</span>
<span class="t" style="top:772.27px;font-size:10.2px;line-height:10.2px;font-weight:normal;font-style:normal;color:#262626;right:974.50px;transform-origin:100% 0;transform:scaleX(2.0654);">(3.565.765)</span>
<span class="t" style="top:772.27px;font-size:10.2px;line-height:10.2px;font-weight:normal;font-style:normal;color:#262626;right:738.00px;transform-origin:100% 0;transform:scaleX(2.0654);">(3.565.765)</span>
<span class="t" style="top:772.27px;font-size:10.2px;line-height:10.2px;font-weight:normal;font-style:normal;color:#262626;right:501.50px;transform-origin:100% 0;transform:scaleX(2.0654);">(3.565.765)</span>
<span class="t" style="top:772.27px;font-size:10.2px;line-height:10.2px;font-weight:normal;font-style:normal;color:#262626;right:265.00px;transform-origin:100% 0;transform:scaleX(2.0654);">(3.565.765)</span>
<span class="t" style="top:772.27px;font-size:10.2px;line-height:10.2px;font-weight:normal;font-style:normal;color:#262626;right:28.50px;transform-origin:100% 0;transform:scaleX(2.0653);">(14.263.060)</span>
<div class="b" style="left:22.00px;top:781.75px;width:1960.50px;height:1.30px;background:#d2d2d2;"></div>
<span class="t" style="top:790.42px;font-size:10.2px;line-height:10.2px;font-weight:bold;font-style:normal;color:#111111;left:57.00px;transform-origin:0 0;transform:scaleX(1.9509);-webkit-text-stroke:0.1px currentColor;">Total Operating Expenses</span>
<svg class="b" style="left:499px;top:788.75px" width="12" height="11" viewBox="0 0 12 11"><path d="M9.6 2.9 C8.7 2.0 5.5 1.9 4.5 3.0 C3.5 4.2 8.6 4.8 8.0 6.7 C7.4 8.5 3.6 8.7 1.6 7.6 M8.9 1.5 L8.4 2.4 M2.6 9.5 L3.1 8.6" fill="none" stroke="#151515" stroke-width="1.5" stroke-linecap="round"/></svg>
<span class="t" style="top:790.25px;font-size:10.4px;line-height:10.4px;font-weight:bold;font-style:normal;color:#0d0d0d;right:1211.00px;transform-origin:100% 0;transform:scaleX(2.0726);-webkit-text-stroke:0;">(814.296.111)</span>
<span class="t" style="top:790.25px;font-size:10.4px;line-height:10.4px;font-weight:bold;font-style:normal;color:#0d0d0d;right:974.50px;transform-origin:100% 0;transform:scaleX(2.0366);-webkit-text-stroke:0;">(18.140.212)</span>
<span class="t" style="top:790.25px;font-size:10.4px;line-height:10.4px;font-weight:bold;font-style:normal;color:#0d0d0d;right:738.00px;transform-origin:100% 0;transform:scaleX(2.0366);-webkit-text-stroke:0;">(18.140.212)</span>
<span class="t" style="top:790.25px;font-size:10.4px;line-height:10.4px;font-weight:bold;font-style:normal;color:#0d0d0d;right:501.50px;transform-origin:100% 0;transform:scaleX(2.0366);-webkit-text-stroke:0;">(18.140.212)</span>
<span class="t" style="top:790.25px;font-size:10.4px;line-height:10.4px;font-weight:bold;font-style:normal;color:#0d0d0d;right:265.00px;transform-origin:100% 0;transform:scaleX(2.0366);-webkit-text-stroke:0;">(18.140.212)</span>
<span class="t" style="top:790.25px;font-size:10.4px;line-height:10.4px;font-weight:bold;font-style:normal;color:#0d0d0d;right:28.50px;transform-origin:100% 0;transform:scaleX(2.0366);-webkit-text-stroke:0;">(72.560.848)</span>
<div class="b" style="left:22.00px;top:818.05px;width:1960.50px;height:1.30px;background:#d2d2d2;"></div>
<div class="b" style="left:22.00px;top:835.90px;width:1960.50px;height:2.00px;background:#c6c6c6;"></div>
<span class="t" style="top:826.72px;font-size:10.2px;line-height:10.2px;font-weight:bold;font-style:normal;color:#111111;left:57.00px;transform-origin:0 0;transform:scaleX(2.0067);-webkit-text-stroke:0.1px currentColor;">Net Operating Income</span>
<svg class="b" style="left:499px;top:825.05px" width="12" height="11" viewBox="0 0 12 11"><path d="M9.6 2.9 C8.7 2.0 5.5 1.9 4.5 3.0 C3.5 4.2 8.6 4.8 8.0 6.7 C7.4 8.5 3.6 8.7 1.6 7.6 M8.9 1.5 L8.4 2.4 M2.6 9.5 L3.1 8.6" fill="none" stroke="#151515" stroke-width="1.5" stroke-linecap="round"/></svg>
<span class="t" style="top:826.55px;font-size:10.4px;line-height:10.4px;font-weight:bold;font-style:normal;color:#0d0d0d;right:1211.00px;transform-origin:100% 0;transform:scaleX(2.0327);-webkit-text-stroke:0;">4.377.705.059</span>
<span class="t" style="top:826.55px;font-size:10.4px;line-height:10.4px;font-weight:bold;font-style:normal;color:#0d0d0d;right:974.50px;transform-origin:100% 0;transform:scaleX(2.0308);-webkit-text-stroke:0;">100.718.621</span>
<span class="t" style="top:826.55px;font-size:10.4px;line-height:10.4px;font-weight:bold;font-style:normal;color:#0d0d0d;right:738.00px;transform-origin:100% 0;transform:scaleX(2.0308);-webkit-text-stroke:0;">100.718.621</span>
<span class="t" style="top:826.55px;font-size:10.4px;line-height:10.4px;font-weight:bold;font-style:normal;color:#0d0d0d;right:501.50px;transform-origin:100% 0;transform:scaleX(2.0308);-webkit-text-stroke:0;">100.718.621</span>
<span class="t" style="top:826.55px;font-size:10.4px;line-height:10.4px;font-weight:bold;font-style:normal;color:#0d0d0d;right:265.00px;transform-origin:100% 0;transform:scaleX(2.0308);-webkit-text-stroke:0;">100.718.621</span>
<span class="t" style="top:826.55px;font-size:10.4px;line-height:10.4px;font-weight:bold;font-style:normal;color:#0d0d0d;right:28.50px;transform-origin:100% 0;transform:scaleX(2.0308);-webkit-text-stroke:0;">402.874.483</span>
<span class="t" style="top:863.02px;font-size:10.2px;line-height:10.2px;font-weight:bold;font-style:normal;color:#111111;text-decoration:underline;left:57.00px;transform-origin:0 0;transform:scaleX(1.9291);-webkit-text-stroke:0.1px currentColor;">CapEx During Operations</span>
<span class="t" style="top:881.42px;font-size:9.9px;line-height:9.9px;font-weight:normal;font-style:normal;color:#262626;left:71.50px;transform-origin:0 0;transform:scaleX(2.1527);">Major Equipment Replacements</span>
<svg class="b" style="left:499px;top:879.50px" width="12" height="11" viewBox="0 0 12 11"><path d="M9.6 2.9 C8.7 2.0 5.5 1.9 4.5 3.0 C3.5 4.2 8.6 4.8 8.0 6.7 C7.4 8.5 3.6 8.7 1.6 7.6 M8.9 1.5 L8.4 2.4 M2.6 9.5 L3.1 8.6" fill="none" stroke="#2a2a2a" stroke-width="1.15" stroke-linecap="round"/></svg>
<span class="t" style="top:881.17px;font-size:10.2px;line-height:10.2px;font-weight:normal;font-style:normal;color:#262626;right:1211.00px;transform-origin:100% 0;transform:scaleX(2.0652);">(135.000.000)</span>
<span class="t" style="top:881.33px;font-size:10px;line-height:10px;font-weight:normal;font-style:normal;color:#555;right:974.50px;transform-origin:100% 0;transform:scaleX(1.9439);">-</span>
<span class="t" style="top:881.33px;font-size:10px;line-height:10px;font-weight:normal;font-style:normal;color:#555;right:738.00px;transform-origin:100% 0;transform:scaleX(1.9439);">-</span>
<span class="t" style="top:881.33px;font-size:10px;line-height:10px;font-weight:normal;font-style:normal;color:#555;right:501.50px;transform-origin:100% 0;transform:scaleX(1.9439);">-</span>
<span class="t" style="top:881.17px;font-size:10.2px;line-height:10.2px;font-weight:normal;font-style:normal;color:#262626;right:265.00px;transform-origin:100% 0;transform:scaleX(2.0653);">(93.750.000)</span>
<span class="t" style="top:881.17px;font-size:10.2px;line-height:10.2px;font-weight:normal;font-style:normal;color:#262626;right:28.50px;transform-origin:100% 0;transform:scaleX(2.0653);">(93.750.000)</span>
<span class="t" style="top:899.57px;font-size:9.9px;line-height:9.9px;font-weight:normal;font-style:normal;color:#262626;left:71.50px;transform-origin:0 0;transform:scaleX(2.0511);">Annual Sustaining CapEx</span>
<svg class="b" style="left:499px;top:897.65px" width="12" height="11" viewBox="0 0 12 11"><path d="M9.6 2.9 C8.7 2.0 5.5 1.9 4.5 3.0 C3.5 4.2 8.6 4.8 8.0 6.7 C7.4 8.5 3.6 8.7 1.6 7.6 M8.9 1.5 L8.4 2.4 M2.6 9.5 L3.1 8.6" fill="none" stroke="#2a2a2a" stroke-width="1.15" stroke-linecap="round"/></svg>
<span class="t" style="top:899.32px;font-size:10.2px;line-height:10.2px;font-weight:normal;font-style:normal;color:#262626;right:1211.00px;transform-origin:100% 0;transform:scaleX(2.0653);">(10.220.000)</span>
<span class="t" style="top:899.32px;font-size:10.2px;line-height:10.2px;font-weight:normal;font-style:normal;color:#262626;right:974.50px;transform-origin:100% 0;transform:scaleX(2.0650);">(182.500)</span>
<span class="t" style="top:899.32px;font-size:10.2px;line-height:10.2px;font-weight:normal;font-style:normal;color:#262626;right:738.00px;transform-origin:100% 0;transform:scaleX(2.0650);">(182.500)</span>
<span class="t" style="top:899.32px;font-size:10.2px;line-height:10.2px;font-weight:normal;font-style:normal;color:#262626;right:501.50px;transform-origin:100% 0;transform:scaleX(2.0650);">(182.500)</span>
<span class="t" style="top:899.32px;font-size:10.2px;line-height:10.2px;font-weight:normal;font-style:normal;color:#262626;right:265.00px;transform-origin:100% 0;transform:scaleX(2.0650);">(182.500)</span>
<span class="t" style="top:899.32px;font-size:10.2px;line-height:10.2px;font-weight:normal;font-style:normal;color:#262626;right:28.50px;transform-origin:100% 0;transform:scaleX(2.0650);">(730.000)</span>
<div class="b" style="left:22.00px;top:908.80px;width:1960.50px;height:1.30px;background:#d2d2d2;"></div>
<span class="t" style="top:917.47px;font-size:10.2px;line-height:10.2px;font-weight:bold;font-style:normal;color:#111111;left:57.00px;transform-origin:0 0;transform:scaleX(1.9489);-webkit-text-stroke:0.1px currentColor;">Total CapEx During Operations</span>
<svg class="b" style="left:499px;top:915.80px" width="12" height="11" viewBox="0 0 12 11"><path d="M9.6 2.9 C8.7 2.0 5.5 1.9 4.5 3.0 C3.5 4.2 8.6 4.8 8.0 6.7 C7.4 8.5 3.6 8.7 1.6 7.6 M8.9 1.5 L8.4 2.4 M2.6 9.5 L3.1 8.6" fill="none" stroke="#151515" stroke-width="1.5" stroke-linecap="round"/></svg>
<span class="t" style="top:917.30px;font-size:10.4px;line-height:10.4px;font-weight:bold;font-style:normal;color:#0d0d0d;right:1211.00px;transform-origin:100% 0;transform:scaleX(2.0361);-webkit-text-stroke:0;">(145.220.000)</span>
<span class="t" style="top:917.30px;font-size:10.4px;line-height:10.4px;font-weight:bold;font-style:normal;color:#0d0d0d;right:974.50px;transform-origin:100% 0;transform:scaleX(2.0371);-webkit-text-stroke:0;">(182.500)</span>
<span class="t" style="top:917.30px;font-size:10.4px;line-height:10.4px;font-weight:bold;font-style:normal;color:#0d0d0d;right:738.00px;transform-origin:100% 0;transform:scaleX(2.0371);-webkit-text-stroke:0;">(182.500)</span>
<span class="t" style="top:917.30px;font-size:10.4px;line-height:10.4px;font-weight:bold;font-style:normal;color:#0d0d0d;right:501.50px;transform-origin:100% 0;transform:scaleX(2.0371);-webkit-text-stroke:0;">(182.500)</span>
<span class="t" style="top:917.30px;font-size:10.4px;line-height:10.4px;font-weight:bold;font-style:normal;color:#0d0d0d;right:265.00px;transform-origin:100% 0;transform:scaleX(2.0366);-webkit-text-stroke:0;">(93.932.500)</span>
<span class="t" style="top:917.30px;font-size:10.4px;line-height:10.4px;font-weight:bold;font-style:normal;color:#0d0d0d;right:28.50px;transform-origin:100% 0;transform:scaleX(2.0366);-webkit-text-stroke:0;">(94.480.000)</span>
<span class="t" style="top:953.77px;font-size:10.2px;line-height:10.2px;font-weight:bold;font-style:normal;color:#111111;text-decoration:underline;left:57.00px;transform-origin:0 0;transform:scaleX(1.9187);-webkit-text-stroke:0.1px currentColor;">Mine Closure Costs</span>
<span class="t" style="top:972.17px;font-size:9.9px;line-height:9.9px;font-weight:normal;font-style:normal;color:#262626;left:71.50px;transform-origin:0 0;transform:scaleX(2.0565);">Closure G&amp;A Costs</span>
<svg class="b" style="left:499px;top:970.25px" width="12" height="11" viewBox="0 0 12 11"><path d="M9.6 2.9 C8.7 2.0 5.5 1.9 4.5 3.0 C3.5 4.2 8.6 4.8 8.0 6.7 C7.4 8.5 3.6 8.7 1.6 7.6 M8.9 1.5 L8.4 2.4 M2.6 9.5 L3.1 8.6" fill="none" stroke="#2a2a2a" stroke-width="1.15" stroke-linecap="round"/></svg>
<span class="t" style="top:972.08px;font-size:10px;line-height:10px;font-weight:normal;font-style:normal;color:#555;right:1211.00px;transform-origin:100% 0;transform:scaleX(1.9439);">-</span>
<span class="t" style="top:972.08px;font-size:10px;line-height:10px;font-weight:normal;font-style:normal;color:#555;right:974.50px;transform-origin:100% 0;transform:scaleX(1.9439);">-</span>
<span class="t" style="top:972.08px;font-size:10px;line-height:10px;font-weight:normal;font-style:normal;color:#555;right:738.00px;transform-origin:100% 0;transform:scaleX(1.9439);">-</span>
<span class="t" style="top:972.08px;font-size:10px;line-height:10px;font-weight:normal;font-style:normal;color:#555;right:501.50px;transform-origin:100% 0;transform:scaleX(1.9439);">-</span>
<span class="t" style="top:972.08px;font-size:10px;line-height:10px;font-weight:normal;font-style:normal;color:#555;right:265.00px;transform-origin:100% 0;transform:scaleX(1.9439);">-</span>
<span class="t" style="top:972.08px;font-size:10px;line-height:10px;font-weight:normal;font-style:normal;color:#555;right:28.50px;transform-origin:100% 0;transform:scaleX(1.9439);">-</span>
<span class="t" style="top:990.32px;font-size:9.9px;line-height:9.9px;font-weight:normal;font-style:normal;color:#262626;left:71.50px;transform-origin:0 0;transform:scaleX(2.0766);">Closure Reserves Account</span>
<svg class="b" style="left:499px;top:988.40px" width="12" height="11" viewBox="0 0 12 11"><path d="M9.6 2.9 C8.7 2.0 5.5 1.9 4.5 3.0 C3.5 4.2 8.6 4.8 8.0 6.7 C7.4 8.5 3.6 8.7 1.6 7.6 M8.9 1.5 L8.4 2.4 M2.6 9.5 L3.1 8.6" fill="none" stroke="#2a2a2a" stroke-width="1.15" stroke-linecap="round"/></svg>
<span class="t" style="top:990.07px;font-size:10.2px;line-height:10.2px;font-weight:normal;font-style:normal;color:#262626;right:1211.00px;transform-origin:100% 0;transform:scaleX(2.0653);">(62.304.014)</span>
<span class="t" style="top:990.07px;font-size:10.2px;line-height:10.2px;font-weight:normal;font-style:normal;color:#262626;right:974.50px;transform-origin:100% 0;transform:scaleX(2.0654);">(1.426.306)</span>
<span class="t" style="top:990.07px;font-size:10.2px;line-height:10.2px;font-weight:normal;font-style:normal;color:#262626;right:738.00px;transform-origin:100% 0;transform:scaleX(2.0654);">(1.426.306)</span>
<span class="t" style="top:990.07px;font-size:10.2px;line-height:10.2px;font-weight:normal;font-style:normal;color:#262626;right:501.50px;transform-origin:100% 0;transform:scaleX(2.0654);">(1.426.306)</span>
<span class="t" style="top:990.07px;font-size:10.2px;line-height:10.2px;font-weight:normal;font-style:normal;color:#262626;right:265.00px;transform-origin:100% 0;transform:scaleX(2.0654);">(1.426.306)</span>
<span class="t" style="top:990.07px;font-size:10.2px;line-height:10.2px;font-weight:normal;font-style:normal;color:#262626;right:28.50px;transform-origin:100% 0;transform:scaleX(2.0654);">(5.705.224)</span>
<div class="b" style="left:22.00px;top:999.55px;width:1960.50px;height:1.30px;background:#d2d2d2;"></div>
<span class="t" style="top:1008.22px;font-size:10.2px;line-height:10.2px;font-weight:bold;font-style:normal;color:#111111;left:57.00px;transform-origin:0 0;transform:scaleX(1.9687);-webkit-text-stroke:0.1px currentColor;">Total Mine Closure Cash flow</span>
<svg class="b" style="left:499px;top:1006.55px" width="12" height="11" viewBox="0 0 12 11"><path d="M9.6 2.9 C8.7 2.0 5.5 1.9 4.5 3.0 C3.5 4.2 8.6 4.8 8.0 6.7 C7.4 8.5 3.6 8.7 1.6 7.6 M8.9 1.5 L8.4 2.4 M2.6 9.5 L3.1 8.6" fill="none" stroke="#151515" stroke-width="1.5" stroke-linecap="round"/></svg>
<span class="t" style="top:1008.05px;font-size:10.4px;line-height:10.4px;font-weight:bold;font-style:normal;color:#0d0d0d;right:1211.00px;transform-origin:100% 0;transform:scaleX(2.0366);-webkit-text-stroke:0;">(62.304.014)</span>
<span class="t" style="top:1008.05px;font-size:10.4px;line-height:10.4px;font-weight:bold;font-style:normal;color:#0d0d0d;right:974.50px;transform-origin:100% 0;transform:scaleX(2.0379);-webkit-text-stroke:0;">(1.426.306)</span>
<span class="t" style="top:1008.05px;font-size:10.4px;line-height:10.4px;font-weight:bold;font-style:normal;color:#0d0d0d;right:738.00px;transform-origin:100% 0;transform:scaleX(2.0379);-webkit-text-stroke:0;">(1.426.306)</span>
<span class="t" style="top:1008.05px;font-size:10.4px;line-height:10.4px;font-weight:bold;font-style:normal;color:#0d0d0d;right:501.50px;transform-origin:100% 0;transform:scaleX(2.0379);-webkit-text-stroke:0;">(1.426.306)</span>
<span class="t" style="top:1008.05px;font-size:10.4px;line-height:10.4px;font-weight:bold;font-style:normal;color:#0d0d0d;right:265.00px;transform-origin:100% 0;transform:scaleX(2.0379);-webkit-text-stroke:0;">(1.426.306)</span>
<span class="t" style="top:1008.05px;font-size:10.4px;line-height:10.4px;font-weight:bold;font-style:normal;color:#0d0d0d;right:28.50px;transform-origin:100% 0;transform:scaleX(2.0379);-webkit-text-stroke:0;">(5.705.224)</span>
<div class="b" style="left:22.00px;top:1035.85px;width:1960.50px;height:1.30px;background:#d2d2d2;"></div>
<div class="b" style="left:22.00px;top:1053.70px;width:1960.50px;height:2.00px;background:#c6c6c6;"></div>
<span class="t" style="top:1044.52px;font-size:10.2px;line-height:10.2px;font-weight:bold;font-style:normal;color:#111111;left:57.00px;transform-origin:0 0;transform:scaleX(1.9785);-webkit-text-stroke:0.1px currentColor;">Net Cash Flow before Debt</span>
<svg class="b" style="left:499px;top:1042.85px" width="12" height="11" viewBox="0 0 12 11"><path d="M9.6 2.9 C8.7 2.0 5.5 1.9 4.5 3.0 C3.5 4.2 8.6 4.8 8.0 6.7 C7.4 8.5 3.6 8.7 1.6 7.6 M8.9 1.5 L8.4 2.4 M2.6 9.5 L3.1 8.6" fill="none" stroke="#151515" stroke-width="1.5" stroke-linecap="round"/></svg>
<span class="t" style="top:1044.35px;font-size:10.4px;line-height:10.4px;font-weight:bold;font-style:normal;color:#0d0d0d;right:1211.00px;transform-origin:100% 0;transform:scaleX(2.0327);-webkit-text-stroke:0;">4.170.181.045</span>
<span class="t" style="top:1044.35px;font-size:10.4px;line-height:10.4px;font-weight:bold;font-style:normal;color:#0d0d0d;right:974.50px;transform-origin:100% 0;transform:scaleX(2.0314);-webkit-text-stroke:0;">99.109.815</span>
<span class="t" style="top:1044.35px;font-size:10.4px;line-height:10.4px;font-weight:bold;font-style:normal;color:#0d0d0d;right:738.00px;transform-origin:100% 0;transform:scaleX(2.0314);-webkit-text-stroke:0;">99.109.815</span>
<span class="t" style="top:1044.35px;font-size:10.4px;line-height:10.4px;font-weight:bold;font-style:normal;color:#0d0d0d;right:501.50px;transform-origin:100% 0;transform:scaleX(2.0314);-webkit-text-stroke:0;">99.109.815</span>
<span class="t" style="top:1044.35px;font-size:10.4px;line-height:10.4px;font-weight:bold;font-style:normal;color:#0d0d0d;right:265.00px;transform-origin:100% 0;transform:scaleX(2.0322);-webkit-text-stroke:0;">5.359.815</span>
<span class="t" style="top:1044.35px;font-size:10.4px;line-height:10.4px;font-weight:bold;font-style:normal;color:#0d0d0d;right:28.50px;transform-origin:100% 0;transform:scaleX(2.0308);-webkit-text-stroke:0;">302.689.259</span>
<span class="t" style="top:1080.82px;font-size:10.2px;line-height:10.2px;font-weight:bold;font-style:normal;color:#111111;left:57.00px;transform-origin:0 0;transform:scaleX(1.9480);-webkit-text-stroke:0.1px currentColor;">Debt Service</span>
<span class="t" style="top:1099.22px;font-size:9.9px;line-height:9.9px;font-weight:normal;font-style:normal;color:#262626;left:71.50px;transform-origin:0 0;transform:scaleX(2.2317);">Interest</span>
<svg class="b" style="left:499px;top:1097.30px" width="12" height="11" viewBox="0 0 12 11"><path d="M9.6 2.9 C8.7 2.0 5.5 1.9 4.5 3.0 C3.5 4.2 8.6 4.8 8.0 6.7 C7.4 8.5 3.6 8.7 1.6 7.6 M8.9 1.5 L8.4 2.4 M2.6 9.5 L3.1 8.6" fill="none" stroke="#2a2a2a" stroke-width="1.15" stroke-linecap="round"/></svg>
<span class="t" style="top:1098.97px;font-size:10.2px;line-height:10.2px;font-weight:normal;font-style:normal;color:#262626;right:1211.00px;transform-origin:100% 0;transform:scaleX(2.0904);">(115.988.801)</span>
<span class="t" style="top:1098.97px;font-size:10.2px;line-height:10.2px;font-weight:normal;font-style:normal;color:#262626;right:974.50px;transform-origin:100% 0;transform:scaleX(2.0650);">(721.483)</span>
<span class="t" style="top:1098.97px;font-size:10.2px;line-height:10.2px;font-weight:normal;font-style:normal;color:#262626;right:738.00px;transform-origin:100% 0;transform:scaleX(2.0650);">(663.276)</span>
<span class="t" style="top:1098.97px;font-size:10.2px;line-height:10.2px;font-weight:normal;font-style:normal;color:#262626;right:501.50px;transform-origin:100% 0;transform:scaleX(2.1019);">(604.411)</span>
<span class="t" style="top:1098.97px;font-size:10.2px;line-height:10.2px;font-weight:normal;font-style:normal;color:#262626;right:265.00px;transform-origin:100% 0;transform:scaleX(2.0650);">(544.881)</span>
<span class="t" style="top:1098.97px;font-size:10.2px;line-height:10.2px;font-weight:normal;font-style:normal;color:#262626;right:28.50px;transform-origin:100% 0;transform:scaleX(2.0654);">(2.534.051)</span>
<span class="t" style="top:1117.37px;font-size:9.9px;line-height:9.9px;font-weight:normal;font-style:normal;color:#262626;left:71.50px;transform-origin:0 0;transform:scaleX(2.1385);">Principal</span>
<svg class="b" style="left:499px;top:1115.45px" width="12" height="11" viewBox="0 0 12 11"><path d="M9.6 2.9 C8.7 2.0 5.5 1.9 4.5 3.0 C3.5 4.2 8.6 4.8 8.0 6.7 C7.4 8.5 3.6 8.7 1.6 7.6 M8.9 1.5 L8.4 2.4 M2.6 9.5 L3.1 8.6" fill="none" stroke="#2a2a2a" stroke-width="1.15" stroke-linecap="round"/></svg>
<span class="t" style="top:1117.12px;font-size:10.2px;line-height:10.2px;font-weight:normal;font-style:normal;color:#262626;right:1211.00px;transform-origin:100% 0;transform:scaleX(2.0652);">(213.074.248)</span>
<span class="t" style="top:1117.12px;font-size:10.2px;line-height:10.2px;font-weight:normal;font-style:normal;color:#262626;right:974.50px;transform-origin:100% 0;transform:scaleX(2.0654);">(5.154.643)</span>
<span class="t" style="top:1117.12px;font-size:10.2px;line-height:10.2px;font-weight:normal;font-style:normal;color:#262626;right:738.00px;transform-origin:100% 0;transform:scaleX(2.0654);">(5.212.850)</span>
<span class="t" style="top:1117.12px;font-size:10.2px;line-height:10.2px;font-weight:normal;font-style:normal;color:#262626;right:501.50px;transform-origin:100% 0;transform:scaleX(2.0654);">(5.271.715)</span>
<span class="t" style="top:1117.12px;font-size:10.2px;line-height:10.2px;font-weight:normal;font-style:normal;color:#262626;right:265.00px;transform-origin:100% 0;transform:scaleX(2.0654);">(5.331.245)</span>
<span class="t" style="top:1117.12px;font-size:10.2px;line-height:10.2px;font-weight:normal;font-style:normal;color:#262626;right:28.50px;transform-origin:100% 0;transform:scaleX(2.0653);">(20.970.453)</span>
<span class="t" style="top:1135.52px;font-size:9.9px;line-height:9.9px;font-weight:normal;font-style:normal;color:#262626;left:71.50px;transform-origin:0 0;transform:scaleX(2.0862);">Loan Balance Payoff at closing</span>
<svg class="b" style="left:499px;top:1133.60px" width="12" height="11" viewBox="0 0 12 11"><path d="M9.6 2.9 C8.7 2.0 5.5 1.9 4.5 3.0 C3.5 4.2 8.6 4.8 8.0 6.7 C7.4 8.5 3.6 8.7 1.6 7.6 M8.9 1.5 L8.4 2.4 M2.6 9.5 L3.1 8.6" fill="none" stroke="#2a2a2a" stroke-width="1.15" stroke-linecap="round"/></svg>
<span class="t" style="top:1135.43px;font-size:10px;line-height:10px;font-weight:normal;font-style:normal;color:#555;right:1211.00px;transform-origin:100% 0;transform:scaleX(1.9439);">-</span>
<span class="t" style="top:1135.43px;font-size:10px;line-height:10px;font-weight:normal;font-style:normal;color:#555;right:974.50px;transform-origin:100% 0;transform:scaleX(1.9439);">-</span>
<span class="t" style="top:1135.43px;font-size:10px;line-height:10px;font-weight:normal;font-style:normal;color:#555;right:738.00px;transform-origin:100% 0;transform:scaleX(1.9439);">-</span>
<span class="t" style="top:1135.43px;font-size:10px;line-height:10px;font-weight:normal;font-style:normal;color:#555;right:501.50px;transform-origin:100% 0;transform:scaleX(1.9439);">-</span>
<span class="t" style="top:1135.43px;font-size:10px;line-height:10px;font-weight:normal;font-style:normal;color:#555;right:265.00px;transform-origin:100% 0;transform:scaleX(1.9439);">-</span>
<span class="t" style="top:1135.43px;font-size:10px;line-height:10px;font-weight:normal;font-style:normal;color:#555;right:28.50px;transform-origin:100% 0;transform:scaleX(1.9439);">-</span>
<div class="b" style="left:22.00px;top:1144.75px;width:1960.50px;height:1.30px;background:#d2d2d2;"></div>
<span class="t" style="top:1153.42px;font-size:10.2px;line-height:10.2px;font-weight:bold;font-style:normal;color:#111111;left:57.00px;transform-origin:0 0;transform:scaleX(1.9762);-webkit-text-stroke:0.1px currentColor;">Total Debt Service</span>
<svg class="b" style="left:499px;top:1151.75px" width="12" height="11" viewBox="0 0 12 11"><path d="M9.6 2.9 C8.7 2.0 5.5 1.9 4.5 3.0 C3.5 4.2 8.6 4.8 8.0 6.7 C7.4 8.5 3.6 8.7 1.6 7.6 M8.9 1.5 L8.4 2.4 M2.6 9.5 L3.1 8.6" fill="none" stroke="#151515" stroke-width="1.5" stroke-linecap="round"/></svg>
<span class="t" style="top:1153.25px;font-size:10.4px;line-height:10.4px;font-weight:bold;font-style:normal;color:#0d0d0d;right:1211.00px;transform-origin:100% 0;transform:scaleX(2.0361);-webkit-text-stroke:0;">(329.063.049)</span>
<span class="t" style="top:1153.25px;font-size:10.4px;line-height:10.4px;font-weight:bold;font-style:normal;color:#0d0d0d;right:974.50px;transform-origin:100% 0;transform:scaleX(2.0379);-webkit-text-stroke:0;">(5.876.126)</span>
<span class="t" style="top:1153.25px;font-size:10.4px;line-height:10.4px;font-weight:bold;font-style:normal;color:#0d0d0d;right:738.00px;transform-origin:100% 0;transform:scaleX(2.0379);-webkit-text-stroke:0;">(5.876.126)</span>
<span class="t" style="top:1153.25px;font-size:10.4px;line-height:10.4px;font-weight:bold;font-style:normal;color:#0d0d0d;right:501.50px;transform-origin:100% 0;transform:scaleX(2.0379);-webkit-text-stroke:0;">(5.876.126)</span>
<span class="t" style="top:1153.25px;font-size:10.4px;line-height:10.4px;font-weight:bold;font-style:normal;color:#0d0d0d;right:265.00px;transform-origin:100% 0;transform:scaleX(2.0379);-webkit-text-stroke:0;">(5.876.126)</span>
<span class="t" style="top:1153.25px;font-size:10.4px;line-height:10.4px;font-weight:bold;font-style:normal;color:#0d0d0d;right:28.50px;transform-origin:100% 0;transform:scaleX(2.0366);-webkit-text-stroke:0;">(23.504.503)</span>
<span class="t" style="top:1189.97px;font-size:9.9px;line-height:9.9px;font-weight:normal;font-style:normal;color:#262626;left:71.50px;transform-origin:0 0;transform:scaleX(2.1057);">Liquidation of Closure Reserves Accoun</span>
<svg class="b" style="left:499px;top:1188.05px" width="12" height="11" viewBox="0 0 12 11"><path d="M9.6 2.9 C8.7 2.0 5.5 1.9 4.5 3.0 C3.5 4.2 8.6 4.8 8.0 6.7 C7.4 8.5 3.6 8.7 1.6 7.6 M8.9 1.5 L8.4 2.4 M2.6 9.5 L3.1 8.6" fill="none" stroke="#2a2a2a" stroke-width="1.15" stroke-linecap="round"/></svg>
<span class="t" style="top:1189.88px;font-size:10px;line-height:10px;font-weight:normal;font-style:normal;color:#555;right:1211.00px;transform-origin:100% 0;transform:scaleX(1.9439);">-</span>
<span class="t" style="top:1189.88px;font-size:10px;line-height:10px;font-weight:normal;font-style:normal;color:#555;right:974.50px;transform-origin:100% 0;transform:scaleX(1.9439);">-</span>
<span class="t" style="top:1189.88px;font-size:10px;line-height:10px;font-weight:normal;font-style:normal;color:#555;right:738.00px;transform-origin:100% 0;transform:scaleX(1.9439);">-</span>
<span class="t" style="top:1189.88px;font-size:10px;line-height:10px;font-weight:normal;font-style:normal;color:#555;right:501.50px;transform-origin:100% 0;transform:scaleX(1.9439);">-</span>
<span class="t" style="top:1189.88px;font-size:10px;line-height:10px;font-weight:normal;font-style:normal;color:#555;right:265.00px;transform-origin:100% 0;transform:scaleX(1.9439);">-</span>
<span class="t" style="top:1189.88px;font-size:10px;line-height:10px;font-weight:normal;font-style:normal;color:#555;right:28.50px;transform-origin:100% 0;transform:scaleX(1.9439);">-</span>
<div class="b" style="left:22.00px;top:1217.35px;width:1960.50px;height:1.30px;background:#d2d2d2;"></div>
<div class="b" style="left:22.00px;top:1235.20px;width:1960.50px;height:2.00px;background:#c6c6c6;"></div>
<span class="t" style="top:1226.02px;font-size:10.2px;line-height:10.2px;font-weight:bold;font-style:normal;color:#111111;left:57.00px;transform-origin:0 0;transform:scaleX(1.9639);-webkit-text-stroke:0.1px currentColor;">Net Cash Flow before Tax</span>
<svg class="b" style="left:499px;top:1224.35px" width="12" height="11" viewBox="0 0 12 11"><path d="M9.6 2.9 C8.7 2.0 5.5 1.9 4.5 3.0 C3.5 4.2 8.6 4.8 8.0 6.7 C7.4 8.5 3.6 8.7 1.6 7.6 M8.9 1.5 L8.4 2.4 M2.6 9.5 L3.1 8.6" fill="none" stroke="#151515" stroke-width="1.5" stroke-linecap="round"/></svg>
<span class="t" style="top:1225.85px;font-size:10.4px;line-height:10.4px;font-weight:bold;font-style:normal;color:#0d0d0d;right:1211.00px;transform-origin:100% 0;transform:scaleX(2.0327);-webkit-text-stroke:0;">3.077.870.286</span>
<span class="t" style="top:1225.85px;font-size:10.4px;line-height:10.4px;font-weight:bold;font-style:normal;color:#0d0d0d;right:974.50px;transform-origin:100% 0;transform:scaleX(2.0314);-webkit-text-stroke:0;">93.233.689</span>
<span class="t" style="top:1225.85px;font-size:10.4px;line-height:10.4px;font-weight:bold;font-style:normal;color:#0d0d0d;right:738.00px;transform-origin:100% 0;transform:scaleX(2.0314);-webkit-text-stroke:0;">93.233.689</span>
<span class="t" style="top:1225.85px;font-size:10.4px;line-height:10.4px;font-weight:bold;font-style:normal;color:#0d0d0d;right:501.50px;transform-origin:100% 0;transform:scaleX(2.0314);-webkit-text-stroke:0;">93.233.689</span>
<span class="t" style="top:1225.85px;font-size:10.4px;line-height:10.4px;font-weight:bold;font-style:normal;color:#0d0d0d;right:265.00px;transform-origin:100% 0;transform:scaleX(2.0639);-webkit-text-stroke:0;">(516.311)</span>
<span class="t" style="top:1225.85px;font-size:10.4px;line-height:10.4px;font-weight:bold;font-style:normal;color:#0d0d0d;right:28.50px;transform-origin:100% 0;transform:scaleX(2.0308);-webkit-text-stroke:0;">279.184.755</span>
<span class="t" style="top:1262.57px;font-size:9.9px;line-height:9.9px;font-weight:normal;font-style:normal;color:#262626;left:71.50px;transform-origin:0 0;transform:scaleX(2.1058);">Income Taxes</span>
<svg class="b" style="left:499px;top:1260.65px" width="12" height="11" viewBox="0 0 12 11"><path d="M9.6 2.9 C8.7 2.0 5.5 1.9 4.5 3.0 C3.5 4.2 8.6 4.8 8.0 6.7 C7.4 8.5 3.6 8.7 1.6 7.6 M8.9 1.5 L8.4 2.4 M2.6 9.5 L3.1 8.6" fill="none" stroke="#2a2a2a" stroke-width="1.15" stroke-linecap="round"/></svg>
<span class="t" style="top:1262.32px;font-size:10.2px;line-height:10.2px;font-weight:normal;font-style:normal;color:#262626;right:1211.00px;transform-origin:100% 0;transform:scaleX(2.0652);">(819.391.338)</span>
<span class="t" style="top:1262.32px;font-size:10.2px;line-height:10.2px;font-weight:normal;font-style:normal;color:#262626;right:974.50px;transform-origin:100% 0;transform:scaleX(2.0653);">(22.164.885)</span>
<span class="t" style="top:1262.32px;font-size:10.2px;line-height:10.2px;font-weight:normal;font-style:normal;color:#262626;right:738.00px;transform-origin:100% 0;transform:scaleX(2.0653);">(22.179.437)</span>
<span class="t" style="top:1262.32px;font-size:10.2px;line-height:10.2px;font-weight:normal;font-style:normal;color:#262626;right:501.50px;transform-origin:100% 0;transform:scaleX(2.0653);">(22.194.153)</span>
<span class="t" style="top:1262.32px;font-size:10.2px;line-height:10.2px;font-weight:normal;font-style:normal;color:#262626;right:265.00px;transform-origin:100% 0;transform:scaleX(2.0653);">(22.209.036)</span>
<span class="t" style="top:1262.32px;font-size:10.2px;line-height:10.2px;font-weight:normal;font-style:normal;color:#262626;right:28.50px;transform-origin:100% 0;transform:scaleX(2.0653);">(88.747.512)</span>
<div class="b" style="left:22.00px;top:1289.95px;width:1960.50px;height:1.30px;background:#d2d2d2;"></div>
<div class="b" style="left:22.00px;top:1307.80px;width:1960.50px;height:2.00px;background:#c6c6c6;"></div>
<span class="t" style="top:1298.62px;font-size:10.2px;line-height:10.2px;font-weight:bold;font-style:normal;color:#111111;left:57.00px;transform-origin:0 0;transform:scaleX(1.9699);-webkit-text-stroke:0.1px currentColor;">Net Cash Flow after Tax</span>
<svg class="b" style="left:499px;top:1296.95px" width="12" height="11" viewBox="0 0 12 11"><path d="M9.6 2.9 C8.7 2.0 5.5 1.9 4.5 3.0 C3.5 4.2 8.6 4.8 8.0 6.7 C7.4 8.5 3.6 8.7 1.6 7.6 M8.9 1.5 L8.4 2.4 M2.6 9.5 L3.1 8.6" fill="none" stroke="#151515" stroke-width="1.5" stroke-linecap="round"/></svg>
<span class="t" style="top:1298.45px;font-size:10.4px;line-height:10.4px;font-weight:bold;font-style:normal;color:#0d0d0d;right:1211.00px;transform-origin:100% 0;transform:scaleX(2.0327);-webkit-text-stroke:0;">2.258.478.948</span>
<span class="t" style="top:1298.45px;font-size:10.4px;line-height:10.4px;font-weight:bold;font-style:normal;color:#0d0d0d;right:974.50px;transform-origin:100% 0;transform:scaleX(2.0314);-webkit-text-stroke:0;">71.068.804</span>
<span class="t" style="top:1298.45px;font-size:10.4px;line-height:10.4px;font-weight:bold;font-style:normal;color:#0d0d0d;right:738.00px;transform-origin:100% 0;transform:scaleX(2.0314);-webkit-text-stroke:0;">71.054.252</span>
<span class="t" style="top:1298.45px;font-size:10.4px;line-height:10.4px;font-weight:bold;font-style:normal;color:#0d0d0d;right:501.50px;transform-origin:100% 0;transform:scaleX(2.0314);-webkit-text-stroke:0;">71.039.535</span>
<span class="t" style="top:1298.45px;font-size:10.4px;line-height:10.4px;font-weight:bold;font-style:normal;color:#0d0d0d;right:265.00px;transform-origin:100% 0;transform:scaleX(2.0366);-webkit-text-stroke:0;">(22.725.347)</span>
<span class="t" style="top:1298.45px;font-size:10.4px;line-height:10.4px;font-weight:bold;font-style:normal;color:#0d0d0d;right:28.50px;transform-origin:100% 0;transform:scaleX(2.0308);-webkit-text-stroke:0;">190.437.244</span>
<span class="t" style="top:1334.92px;font-size:10.2px;line-height:10.2px;font-weight:bold;font-style:normal;color:#111111;text-decoration:underline;left:57.00px;transform-origin:0 0;transform:scaleX(1.9186);-webkit-text-stroke:0.1px currentColor;">Cumulative CF</span>
<span class="t" style="top:1353.07px;font-size:10.2px;line-height:10.2px;font-weight:bold;font-style:normal;color:#111111;left:57.00px;transform-origin:0 0;transform:scaleX(1.9063);-webkit-text-stroke:0.1px currentColor;">Opening Cash Balance</span>
<svg class="b" style="left:499px;top:1351.40px" width="12" height="11" viewBox="0 0 12 11"><path d="M9.6 2.9 C8.7 2.0 5.5 1.9 4.5 3.0 C3.5 4.2 8.6 4.8 8.0 6.7 C7.4 8.5 3.6 8.7 1.6 7.6 M8.9 1.5 L8.4 2.4 M2.6 9.5 L3.1 8.6" fill="none" stroke="#151515" stroke-width="1.5" stroke-linecap="round"/></svg>
<span class="t" style="top:1353.23px;font-size:10px;line-height:10px;font-weight:bold;font-style:normal;color:#111;right:1211.00px;transform-origin:100% 0;transform:scaleX(1.9439);">-</span>
<span class="t" style="top:1352.90px;font-size:10.4px;line-height:10.4px;font-weight:bold;font-style:normal;color:#0d0d0d;right:974.50px;transform-origin:100% 0;transform:scaleX(2.0327);-webkit-text-stroke:0;">3.021.726.658</span>
<span class="t" style="top:1352.90px;font-size:10.4px;line-height:10.4px;font-weight:bold;font-style:normal;color:#0d0d0d;right:738.00px;transform-origin:100% 0;transform:scaleX(2.0327);-webkit-text-stroke:0;">3.092.795.462</span>
<span class="t" style="top:1352.90px;font-size:10.4px;line-height:10.4px;font-weight:bold;font-style:normal;color:#0d0d0d;right:501.50px;transform-origin:100% 0;transform:scaleX(2.0327);-webkit-text-stroke:0;">3.163.849.713</span>
<span class="t" style="top:1352.90px;font-size:10.4px;line-height:10.4px;font-weight:bold;font-style:normal;color:#0d0d0d;right:265.00px;transform-origin:100% 0;transform:scaleX(2.0327);-webkit-text-stroke:0;">3.234.889.249</span>
<span class="t" style="top:1352.90px;font-size:10.4px;line-height:10.4px;font-weight:bold;font-style:normal;color:#0d0d0d;right:28.50px;transform-origin:100% 0;transform:scaleX(2.0327);-webkit-text-stroke:0;">3.021.726.658</span>
<span class="t" style="top:1371.47px;font-size:9.9px;line-height:9.9px;font-weight:normal;font-style:normal;color:#262626;left:71.50px;transform-origin:0 0;transform:scaleX(2.1094);">Net Cash Flow after Tax</span>
<svg class="b" style="left:499px;top:1369.55px" width="12" height="11" viewBox="0 0 12 11"><path d="M9.6 2.9 C8.7 2.0 5.5 1.9 4.5 3.0 C3.5 4.2 8.6 4.8 8.0 6.7 C7.4 8.5 3.6 8.7 1.6 7.6 M8.9 1.5 L8.4 2.4 M2.6 9.5 L3.1 8.6" fill="none" stroke="#2a2a2a" stroke-width="1.15" stroke-linecap="round"/></svg>
<span class="t" style="top:1371.22px;font-size:10.2px;line-height:10.2px;font-weight:normal;font-style:normal;color:#262626;right:1211.00px;transform-origin:100% 0;transform:scaleX(2.0654);">2.258.478.948</span>
<span class="t" style="top:1371.22px;font-size:10.2px;line-height:10.2px;font-weight:normal;font-style:normal;color:#262626;right:974.50px;transform-origin:100% 0;transform:scaleX(2.0652);">71.068.804</span>
<span class="t" style="top:1371.22px;font-size:10.2px;line-height:10.2px;font-weight:normal;font-style:normal;color:#262626;right:738.00px;transform-origin:100% 0;transform:scaleX(2.0652);">71.054.252</span>
<span class="t" style="top:1371.22px;font-size:10.2px;line-height:10.2px;font-weight:normal;font-style:normal;color:#262626;right:501.50px;transform-origin:100% 0;transform:scaleX(2.0652);">71.039.535</span>
<span class="t" style="top:1371.22px;font-size:10.2px;line-height:10.2px;font-weight:normal;font-style:normal;color:#262626;right:265.00px;transform-origin:100% 0;transform:scaleX(2.0653);">(22.725.347)</span>
<span class="t" style="top:1371.22px;font-size:10.2px;line-height:10.2px;font-weight:normal;font-style:normal;color:#262626;right:28.50px;transform-origin:100% 0;transform:scaleX(2.0657);">190.437.244</span>
<span class="t" style="top:1389.62px;font-size:9.9px;line-height:9.9px;font-weight:normal;font-style:normal;color:#262626;left:71.50px;transform-origin:0 0;transform:scaleX(2.1058);">Grant issued</span>
<svg class="b" style="left:499px;top:1387.70px" width="12" height="11" viewBox="0 0 12 11"><path d="M9.6 2.9 C8.7 2.0 5.5 1.9 4.5 3.0 C3.5 4.2 8.6 4.8 8.0 6.7 C7.4 8.5 3.6 8.7 1.6 7.6 M8.9 1.5 L8.4 2.4 M2.6 9.5 L3.1 8.6" fill="none" stroke="#2a2a2a" stroke-width="1.15" stroke-linecap="round"/></svg>
<span class="t" style="top:1389.37px;font-size:10.2px;line-height:10.2px;font-weight:normal;font-style:normal;color:#262626;right:1211.00px;transform-origin:100% 0;transform:scaleX(2.0652);">50.000.000</span>
<span class="t" style="top:1389.53px;font-size:10px;line-height:10px;font-weight:normal;font-style:normal;color:#555;right:974.50px;transform-origin:100% 0;transform:scaleX(1.9439);">-</span>
<span class="t" style="top:1389.53px;font-size:10px;line-height:10px;font-weight:normal;font-style:normal;color:#555;right:738.00px;transform-origin:100% 0;transform:scaleX(1.9439);">-</span>
<span class="t" style="top:1389.53px;font-size:10px;line-height:10px;font-weight:normal;font-style:normal;color:#555;right:501.50px;transform-origin:100% 0;transform:scaleX(1.9439);">-</span>
<span class="t" style="top:1389.53px;font-size:10px;line-height:10px;font-weight:normal;font-style:normal;color:#555;right:265.00px;transform-origin:100% 0;transform:scaleX(1.9439);">-</span>
<span class="t" style="top:1389.53px;font-size:10px;line-height:10px;font-weight:normal;font-style:normal;color:#555;right:28.50px;transform-origin:100% 0;transform:scaleX(1.9439);">-</span>
<span class="t" style="top:1407.77px;font-size:9.9px;line-height:9.9px;font-weight:normal;font-style:normal;color:#262626;left:71.50px;transform-origin:0 0;transform:scaleX(2.0899);">Equity Issued</span>
<svg class="b" style="left:499px;top:1405.85px" width="12" height="11" viewBox="0 0 12 11"><path d="M9.6 2.9 C8.7 2.0 5.5 1.9 4.5 3.0 C3.5 4.2 8.6 4.8 8.0 6.7 C7.4 8.5 3.6 8.7 1.6 7.6 M8.9 1.5 L8.4 2.4 M2.6 9.5 L3.1 8.6" fill="none" stroke="#2a2a2a" stroke-width="1.15" stroke-linecap="round"/></svg>
<span class="t" style="top:1407.52px;font-size:10.2px;line-height:10.2px;font-weight:normal;font-style:normal;color:#262626;right:1211.00px;transform-origin:100% 0;transform:scaleX(2.0657);">434.327.710</span>
<span class="t" style="top:1407.68px;font-size:10px;line-height:10px;font-weight:normal;font-style:normal;color:#555;right:974.50px;transform-origin:100% 0;transform:scaleX(1.9439);">-</span>
<span class="t" style="top:1407.68px;font-size:10px;line-height:10px;font-weight:normal;font-style:normal;color:#555;right:738.00px;transform-origin:100% 0;transform:scaleX(1.9439);">-</span>
<span class="t" style="top:1407.68px;font-size:10px;line-height:10px;font-weight:normal;font-style:normal;color:#555;right:501.50px;transform-origin:100% 0;transform:scaleX(1.9439);">-</span>
<span class="t" style="top:1407.68px;font-size:10px;line-height:10px;font-weight:normal;font-style:normal;color:#555;right:265.00px;transform-origin:100% 0;transform:scaleX(1.9439);">-</span>
<span class="t" style="top:1407.68px;font-size:10px;line-height:10px;font-weight:normal;font-style:normal;color:#555;right:28.50px;transform-origin:100% 0;transform:scaleX(1.9439);">-</span>
<span class="t" style="top:1425.92px;font-size:9.9px;line-height:9.9px;font-weight:normal;font-style:normal;color:#262626;left:71.50px;transform-origin:0 0;transform:scaleX(2.0959);">Debt Issued</span>
<svg class="b" style="left:499px;top:1424.00px" width="12" height="11" viewBox="0 0 12 11"><path d="M9.6 2.9 C8.7 2.0 5.5 1.9 4.5 3.0 C3.5 4.2 8.6 4.8 8.0 6.7 C7.4 8.5 3.6 8.7 1.6 7.6 M8.9 1.5 L8.4 2.4 M2.6 9.5 L3.1 8.6" fill="none" stroke="#2a2a2a" stroke-width="1.15" stroke-linecap="round"/></svg>
<span class="t" style="top:1425.67px;font-size:10.2px;line-height:10.2px;font-weight:normal;font-style:normal;color:#262626;right:1211.00px;transform-origin:100% 0;transform:scaleX(2.0657);">278.920.000</span>
<span class="t" style="top:1425.84px;font-size:10px;line-height:10px;font-weight:normal;font-style:normal;color:#555;right:974.50px;transform-origin:100% 0;transform:scaleX(1.9439);">-</span>
<span class="t" style="top:1425.84px;font-size:10px;line-height:10px;font-weight:normal;font-style:normal;color:#555;right:738.00px;transform-origin:100% 0;transform:scaleX(1.9439);">-</span>
<span class="t" style="top:1425.84px;font-size:10px;line-height:10px;font-weight:normal;font-style:normal;color:#555;right:501.50px;transform-origin:100% 0;transform:scaleX(1.9439);">-</span>
<span class="t" style="top:1425.84px;font-size:10px;line-height:10px;font-weight:normal;font-style:normal;color:#555;right:265.00px;transform-origin:100% 0;transform:scaleX(1.9439);">-</span>
<span class="t" style="top:1425.84px;font-size:10px;line-height:10px;font-weight:normal;font-style:normal;color:#555;right:28.50px;transform-origin:100% 0;transform:scaleX(1.9439);">-</span>
<div class="b" style="left:22.00px;top:1435.15px;width:1960.50px;height:1.30px;background:#d2d2d2;"></div>
<div class="b" style="left:22.00px;top:1453.00px;width:1960.50px;height:2.00px;background:#c6c6c6;"></div>
<span class="t" style="top:1443.82px;font-size:10.2px;line-height:10.2px;font-weight:bold;font-style:normal;color:#111111;left:57.00px;transform-origin:0 0;transform:scaleX(1.8586);-webkit-text-stroke:0.1px currentColor;">Closing Cash Balance</span>
<svg class="b" style="left:499px;top:1442.15px" width="12" height="11" viewBox="0 0 12 11"><path d="M9.6 2.9 C8.7 2.0 5.5 1.9 4.5 3.0 C3.5 4.2 8.6 4.8 8.0 6.7 C7.4 8.5 3.6 8.7 1.6 7.6 M8.9 1.5 L8.4 2.4 M2.6 9.5 L3.1 8.6" fill="none" stroke="#151515" stroke-width="1.5" stroke-linecap="round"/></svg>
<span class="t" style="top:1443.65px;font-size:10.4px;line-height:10.4px;font-weight:bold;font-style:normal;color:#0d0d0d;right:1211.00px;transform-origin:100% 0;transform:scaleX(2.0327);-webkit-text-stroke:0;">3.021.726.658</span>
<span class="t" style="top:1443.65px;font-size:10.4px;line-height:10.4px;font-weight:bold;font-style:normal;color:#0d0d0d;right:974.50px;transform-origin:100% 0;transform:scaleX(2.0327);-webkit-text-stroke:0;">3.092.795.462</span>
<span class="t" style="top:1443.65px;font-size:10.4px;line-height:10.4px;font-weight:bold;font-style:normal;color:#0d0d0d;right:738.00px;transform-origin:100% 0;transform:scaleX(2.0327);-webkit-text-stroke:0;">3.163.849.713</span>
<span class="t" style="top:1443.65px;font-size:10.4px;line-height:10.4px;font-weight:bold;font-style:normal;color:#0d0d0d;right:501.50px;transform-origin:100% 0;transform:scaleX(2.0327);-webkit-text-stroke:0;">3.234.889.249</span>
<span class="t" style="top:1443.65px;font-size:10.4px;line-height:10.4px;font-weight:bold;font-style:normal;color:#0d0d0d;right:265.00px;transform-origin:100% 0;transform:scaleX(2.0327);-webkit-text-stroke:0;">3.212.163.902</span>
<span class="t" style="top:1443.65px;font-size:10.4px;line-height:10.4px;font-weight:bold;font-style:normal;color:#0d0d0d;right:28.50px;transform-origin:100% 0;transform:scaleX(2.0327);-webkit-text-stroke:0;">3.212.163.902</span>
</body></html>
